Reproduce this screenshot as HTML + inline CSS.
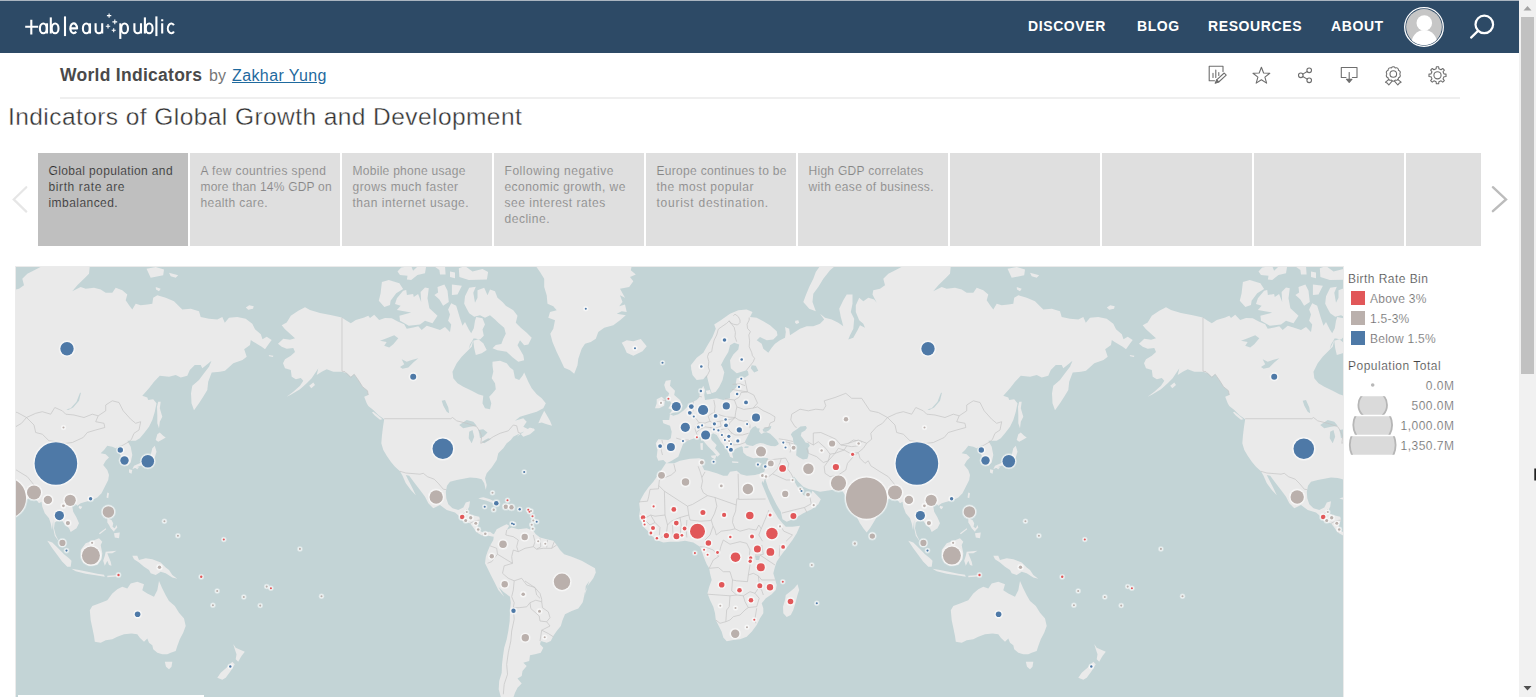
<!DOCTYPE html>
<html><head><meta charset="utf-8"><title>World Indicators</title>
<style>
*{box-sizing:border-box;margin:0;padding:0}
html,body{width:1536px;height:697px;overflow:hidden;background:#fff;font-family:"Liberation Sans",sans-serif;}
#hdr{position:absolute;left:0;top:0;width:1519px;height:53px;background:#2d4a66;box-shadow:inset 0 1px 0 #aab5c0}
.nav{position:absolute;top:18px;color:#fff;font-weight:bold;font-size:14px;letter-spacing:0.6px;line-height:16px;white-space:nowrap}
#sub{position:absolute;left:0;top:53px;width:1519px;height:46px;}
#ttl{position:absolute;left:60px;top:12px;font-size:17.5px;font-weight:bold;color:#4a4a4a;line-height:20px;letter-spacing:0.28px;white-space:nowrap}
#by{position:absolute;left:209px;top:13px;font-size:16px;color:#777;line-height:20px;}
#auth{position:absolute;left:232px;top:13px;font-size:16px;color:#1f6a9e;line-height:20px;text-decoration:underline;white-space:nowrap;letter-spacing:0.4px}
#hr{position:absolute;left:60px;top:97px;width:1400px;height:2px;background:#efefef}
#h1{position:absolute;left:8px;top:101.700px;font-size:24.5px;color:#333;-webkit-text-stroke:0.35px #fff;line-height:30px;white-space:nowrap;letter-spacing:0.43px}
.sb{position:absolute;top:153px;height:93px;width:150px;background:#dfdfdf;color:#868686;font-size:12px;line-height:16px;padding:10px 0 0 10.500px;white-space:nowrap;letter-spacing:0.28px}
.sb{-webkit-text-stroke:.15px #dfdfdf}
.sb.sel{background:#bfbfbf;color:#2e2e2e;-webkit-text-stroke:.18px #bfbfbf}
#map{position:absolute;left:15px;top:266px;width:1329px;height:431px;overflow:hidden;background:#c3d4d6}
.lg{position:absolute;font-size:12px;color:#444;line-height:14px;white-space:nowrap;-webkit-text-stroke:.2px #fff;margin-top:1px}
#scroll{position:absolute;left:1519px;top:0;width:17px;height:697px;background:#f1f1f1}
#thumb{position:absolute;left:2px;top:17px;width:13px;height:357px;background:#c1c1c1}
</style></head><body>
<div id="hdr">
<svg style="position:absolute;left:0;top:0" width="200" height="53" viewBox="0 0 200 53" fill="none" stroke="#fff" stroke-width="2.1" stroke-linecap="butt" stroke-linejoin="round"><path d="M25.200 26.800H38.200M31.300 19.700V34.600"/><ellipse cx="43.3" cy="28.4" rx="3.4" ry="4.9"/><path d="M46.99999999999999 23.3V33.5"/><path d="M50.8 17.400V33.5"/><ellipse cx="55.099999999999994" cy="28.4" rx="3.4" ry="4.9"/><path d="M65 16.400V36.100"/><path d="M70.3 28.4H77.10000000000001A3.4 4.9 0 1 0 76.2 31.599999999999998"/><ellipse cx="86.3" cy="28.4" rx="3.4" ry="4.9"/><path d="M90.0 23.3V33.5"/><path d="M95.6 23.3V30.0a3.300 3.300 0 0 0 6.600 0V23.3M102.19999999999999 23.3V33.5"/><path stroke-width="1.100" d="M106.89999999999999 15.6H111.3M109.1 13.399999999999999V17.8M112.39999999999999 21.9H117.2M114.8 19.5V24.299999999999997M105.8 26.2H110.2M108 24.0V28.4M111.7 30.3H115.7M113.7 28.3V32.3"/><path d="M120.3 23.3V38.900"/><ellipse cx="124.60000000000001" cy="28.4" rx="3.4" ry="4.9"/><path d="M134.4 23.3V30.0a3.300 3.300 0 0 0 6.600 0V23.3M141.0 23.3V33.5"/><path d="M144.9 17.400V33.5"/><ellipse cx="149.20000000000002" cy="28.4" rx="3.4" ry="4.9"/><path d="M156.400 16.400V36.100"/><path d="M162.200 23.3V33.5M162.200 19.200V21.200"/><path d="M173.9 25.299999999999997A3.4 4.9 0 1 0 173.9 31.5"/></svg>
<div class="nav" style="left:1028px">DISCOVER</div>
<div class="nav" style="left:1137px">BLOG</div>
<div class="nav" style="left:1208px">RESOURCES</div>
<div class="nav" style="left:1331px">ABOUT</div>
<svg style="position:absolute;left:1402px;top:5px" width="44" height="44" viewBox="0 0 44 44">
<defs><clipPath id="avc"><circle cx="22" cy="22" r="18.200"/></clipPath></defs>
<circle cx="22" cy="22" r="19.300" fill="none" stroke="#fff" stroke-width="1.300"/><circle cx="22" cy="22" r="17.900" fill="#c6c6c6"/>
<g clip-path="url(#avc)" fill="#fff"><circle cx="22.300" cy="18" r="7.800"/><ellipse cx="22.300" cy="38.800" rx="12.900" ry="13.700"/></g>
</svg>
<svg style="position:absolute;left:1462px;top:8px" width="40" height="36" viewBox="0 0 40 36" fill="none" stroke="#fff" stroke-width="2.200" stroke-linecap="round"><circle cx="22.300" cy="16.400" r="8.800"/><path d="M15.500 23.400l-6.400 6.200"/></svg>
</div>
<div id="sub">
<div id="ttl">World Indicators</div><div id="by">by</div><div id="auth">Zakhar Yung</div>
<svg style="position:absolute;left:1200px;top:8px" width="260" height="30" viewBox="0 0 260 30" fill="none" stroke="#6e6e6e" stroke-width="1.1" stroke-linejoin="round" stroke-linecap="round"><path d="M23 10.500V5.300H9.200V19.800H14.500"/><path d="M13 12.300V16.500M15.800 9V16.500M18.800 11.500V14.500"/><path d="M16.700 18.800L24.200 12L26.200 14.200L18.700 21Z"/><path d="M16.700 18.800L15.200 22.300L18.700 21Z" fill="#6e6e6e"/><path d="M61.4 6.2L63.6 12.0L69.8 12.3L64.9 16.1L66.6 22.1L61.4 18.7L56.2 22.1L57.9 16.1L53.0 12.3L59.2 12.0Z"/><circle cx="109.200" cy="9.300" r="2.300"/><circle cx="100.800" cy="14.300" r="2.300"/><circle cx="109.200" cy="19.300" r="2.300"/><path d="M102.800 13.100L107.200 10.500M102.800 15.500L107.200 18.100"/><path d="M146 16.500H141.300V6.500H157V16.500H152.400"/><path d="M149.200 11.500V18.500"/><path d="M146.400 18.200H152L149.200 21.500Z" fill="#6e6e6e"/><path d="M195.28 6.91A2.27 2.27 0 0 1 198.48 9.24A2.27 2.27 0 0 1 199.70 13.00A2.27 2.27 0 0 1 198.48 16.76A2.27 2.27 0 0 1 195.28 19.09A2.27 2.27 0 0 1 191.32 19.09A2.27 2.27 0 0 1 188.12 16.76A2.27 2.27 0 0 1 186.90 13.00A2.27 2.27 0 0 1 188.12 9.24A2.27 2.27 0 0 1 191.32 6.91A2.27 2.27 0 0 1 195.28 6.91Z"/><circle cx="193.300" cy="13" r="3.300"/><path d="M189 18.300L185.500 21.200L187.500 22.300L188.800 24L192.300 19.800M197.600 18.300L201.100 21.200L199.100 22.300L197.800 24L194.300 19.800"/><path d="M236.11 7.85L236.36 5.78L238.64 5.78L238.89 7.85L241.08 8.76L242.72 7.46L244.34 9.08L243.04 10.72L243.95 12.91L246.02 13.16L246.02 15.44L243.95 15.69L243.04 17.88L244.34 19.52L242.72 21.14L241.08 19.84L238.89 20.75L238.64 22.82L236.36 22.82L236.11 20.75L233.92 19.84L232.28 21.14L230.66 19.52L231.96 17.88L231.05 15.69L228.98 15.44L228.98 13.16L231.05 12.91L231.96 10.72L230.66 9.08L232.28 7.46L233.92 8.76Z"/><circle cx="237.500" cy="14.300" r="3.600"/></svg>
</div>
<div id="hr"></div>
<div id="h1">Indicators of Global Growth and Development</div>
<svg style="position:absolute;left:0;top:170px" width="40" height="60" viewBox="0 0 40 60" fill="none" stroke="#e6e6e6" stroke-width="2.2" stroke-linecap="round"><path d="M26.300 17.200L13.700 29.400L26.300 41.600"/></svg>
<svg style="position:absolute;left:1480px;top:170px" width="38" height="60" viewBox="0 0 38 60" fill="none" stroke="#bcbcbc" stroke-width="2.4" stroke-linecap="round"><path d="M12.900 17.200L26 29.400L12.900 41.200"/></svg>
<div class="sb sel" style="left:38px"><span style="letter-spacing:0.365px">Global population and</span><br><span style="letter-spacing:0.610px">birth rate are</span><br><span style="letter-spacing:0.450px">imbalanced.</span></div>
<div class="sb" style="left:190px"><span style="letter-spacing:0.395px">A few countries spend</span><br><span style="letter-spacing:0.210px">more than 14% GDP on</span><br><span style="letter-spacing:0.400px">health care.</span></div>
<div class="sb" style="left:342px"><span style="letter-spacing:0.280px">Mobile phone usage</span><br><span style="letter-spacing:0.470px">grows much faster</span><br><span style="letter-spacing:0.530px">than internet usage.</span></div>
<div class="sb" style="left:494px"><span style="letter-spacing:0.560px">Following negative</span><br><span style="letter-spacing:0.450px">economic growth, we</span><br><span style="letter-spacing:0.515px">see interest rates</span><br><span style="letter-spacing:0.520px">decline.</span></div>
<div class="sb" style="left:646px"><span style="letter-spacing:0.310px">Europe continues to be</span><br><span style="letter-spacing:0.500px">the most popular</span><br><span style="letter-spacing:0.750px">tourist destination.</span></div>
<div class="sb" style="left:798px"><span style="letter-spacing:0.280px">High GDP correlates</span><br><span style="letter-spacing:0.330px">with ease of business.</span></div>
<div class="sb" style="left:950px"></div>
<div class="sb" style="left:1102px"></div>
<div class="sb" style="left:1254px"></div>
<div class="sb" style="left:1406px;width:75px"></div>
<div class="lg" style="left:1348px;top:271px;letter-spacing:.45px">Birth Rate Bin</div>
<div style="position:absolute;left:1351px;top:291px;width:14px;height:14px;background:#e15759"></div>
<div style="position:absolute;left:1351px;top:311px;width:14px;height:14px;background:#bab0ac"></div>
<div style="position:absolute;left:1351px;top:331px;width:14px;height:14px;background:#4e79a7"></div>
<div class="lg" style="left:1370px;top:291px;color:#666;letter-spacing:.25px">Above 3%</div>
<div class="lg" style="left:1370px;top:311px;color:#666;letter-spacing:.25px">1.5-3%</div>
<div class="lg" style="left:1370px;top:331px;color:#666;letter-spacing:.25px">Below 1.5%</div>
<div class="lg" style="left:1348px;top:358px;letter-spacing:.5px">Population Total</div>
<svg style="position:absolute;left:1346px;top:375px" width="60" height="82" viewBox="0 0 60 82">
<circle cx="26.700" cy="10" r="1.800" fill="#b8b8b8"/>
<g fill="#dadada" stroke="#b6b6b6" stroke-width="1.800">
<svg x="0" y="21.300" width="60" height="18.500" viewBox="0 21.300 60 18.500"><circle cx="26.700" cy="30" r="14.300"/></svg>
<svg x="0" y="41.300" width="60" height="18.500" viewBox="0 41.300 60 18.500"><circle cx="26.700" cy="50" r="19.400"/></svg>
<svg x="0" y="61.300" width="60" height="18.500" viewBox="0 61.300 60 18.500"><circle cx="26.700" cy="70" r="22.900"/></svg>
</g>
</svg>
<div class="lg" style="left:1354.500px;top:378px;width:100px;text-align:right;color:#666;letter-spacing:.5px">0.0M</div>
<div class="lg" style="left:1354.500px;top:398px;width:100px;text-align:right;color:#666;letter-spacing:.5px">500.0M</div>
<div class="lg" style="left:1354.500px;top:418px;width:100px;text-align:right;color:#666;letter-spacing:.5px">1,000.0M</div>
<div class="lg" style="left:1354.500px;top:438px;width:100px;text-align:right;color:#666;letter-spacing:.5px">1,350.7M</div>
<div id="scroll"><div id="thumb"></div>
<svg style="position:absolute;left:0;top:0" width="17" height="697" viewBox="0 0 17 697"><path d="M4.500 10.500l4-4.500 4 4.500z" fill="#a3a3a3"/><path d="M4.500 686l4 4.500 4-4.500z" fill="#505050"/><rect x="15.300" y="468.500" width="1.700" height="12" fill="#222"/></svg>
</div>
<div id="map"><svg width="1329" height="431" viewBox="0 0 1329 431" style="position:absolute;left:0;top:0">
<defs><g id="w">
<path fill="#eaeaea" d="M263 77.7 L268.3 72.7 L275 73.7 L280 72.3 L275 67.7 L270 63.2 L266.7 59.3 L271.7 56.5 L275.8 49.8 L283.3 44.8 L290 41.2 L295 44 L305 47 L316.7 49.3 L326.7 51.5 L331.7 54.8 L335.8 57.3 L340.8 54 L349.2 51.5 L353.3 49.8 L355 52 L359.2 48.7 L362.5 52.3 L364.2 54 L370 52 L376.7 52.3 L383.3 55.7 L389.2 58.2 L391.7 62.7 L398.3 61.5 L403.3 60.3 L406.7 64 L411.7 59.8 L417.5 61.5 L425 64.1 L430 61 L435 66 L436.2 58.5 L433.1 54.8 L435 48.5 L433.1 43.5 L436.2 37.2 L441.2 39.8 L443.1 46 L445 52.2 L447.5 59.8 L450 56 L453.8 63.5 L456.2 67.2 L458.8 62.2 L460 54.8 L461.2 51 L467.5 52.2 L470 58.5 L467.5 63.5 L468.8 69.8 L465 73.5 L458.8 72.2 L455 78.5 L453.8 83 L460.8 69 L458.3 74 L456.7 80.7 L451.7 85.7 L446.7 90.7 L441.7 97.3 L437.5 105.7 L438.3 112.3 L442.5 117.3 L448.3 120.7 L456.7 124.8 L463.3 128.2 L468.3 129.8 L467.5 137.3 L470 142.3 L475 143.2 L476.3 137.3 L474.2 130.7 L477.5 127.3 L480.8 123.2 L480 117.3 L476.7 112.3 L478.3 105.7 L477.5 99.8 L477.5 95.7 L485 94.8 L491.7 97.3 L495 101.5 L498.3 104 L500 112.3 L504.2 114 L507.5 109.8 L509.2 106.5 L513.3 115.7 L516.7 122.3 L521.7 128.2 L526.7 132.3 L530.8 137.3 L528.3 142.3 L521.7 145.7 L513.3 148.2 L505 150.7 L500 154.8 L508.3 152.3 L511.7 155.7 L508.3 160.7 L513.3 163.2 L518.3 162.3 L520 164 L515 168.2 L508.3 170.7 L505 167.3 L501.7 170.7 L515 161.5 L519.2 164 L515.8 167.3 L511.7 169 L515 166.5 L510.8 164.8 L505 167.3 L498.3 170.7 L495.8 174 L491.7 177.3 L488.3 182.3 L483.3 187.3 L481.7 194 L476.7 201.5 L471.7 207.3 L470 212.3 L471.7 219 L470.8 223.7 L469.2 217.3 L466.7 213.2 L461.7 212 L455 211.5 L448.3 212.7 L441.7 214 L435 215.7 L432 219.8 L430.8 225.7 L431.3 232.3 L433.3 238.2 L437.5 242.3 L443.3 244 L448.3 241.5 L450.8 236.5 L455 235.3 L454.2 240.7 L451.7 245.7 L453.3 249 L451.7 246.5 L456.7 249 L464.2 250.7 L465 254 L462.5 259.8 L464.2 264.8 L468.3 266.5 L475 265.7 L478.3 268.2 L479.2 267.7 L481.7 263.2 L488.3 259.8 L491.7 258.2 L494.2 259.8 L491.7 264 L496.7 261.5 L503.3 263.2 L511.7 262.3 L518.3 264.8 L520.8 268.2 L525 271.5 L531.7 273.2 L538.3 274.8 L541.7 279 L545 284 L549.2 288.2 L556.7 290.7 L566.7 294.8 L574.2 299 L580 302.3 L580.8 306.5 L578.3 312.3 L573.3 319 L570 325.7 L568.3 334 L574.2 315 L570.8 320 L570 328.3 L567.5 336.7 L563.3 342.5 L556.7 345 L550 348.3 L547.5 354.2 L545.8 360 L541.7 365 L538.3 370 L535.8 375 L531.7 376.7 L525.8 375 L525 378.3 L528.3 381.7 L525.8 386.7 L520 388.3 L515 389.2 L514.2 395 L508.3 396.7 L511.7 400 L507.5 405 L506.7 410 L502.5 412.5 L506.7 417.5 L502.5 421.7 L500 426.7 L498.3 431.7 L498.3 435 L485.8 435 L485.8 431 L483.7 423.3 L484.2 415 L486.7 406.7 L487 398.3 L488 390 L489.2 381.7 L491.7 373.3 L493.3 365 L494.7 355 L495 345 L495.8 336.7 L495 330.8 L488.3 325.8 L482.5 320 L480 315 L489.2 330.7 L483.3 324 L480 317.3 L475.8 309 L472.5 302.3 L470 297.3 L470.8 290.7 L472.5 285.7 L475 279.8 L478.3 274 L478.7 270.7 L473.3 269.8 L467.5 269.8 L461.7 266.5 L458.3 261.5 L455 257.3 L448.3 255.7 L445 250.7 L440 246.5 L431.7 244 L425 239 L418.3 242.3 L413.3 237.3 L410 230.7 L405 224 L399.2 216.5 L394.2 209.8 L390.8 209 L394.2 215.7 L397.5 222.3 L400.8 229.3 L395.8 224 L390.8 217.3 L387.5 209.8 L385 205.3 L380 200.7 L375.8 195.7 L371.7 189.8 L368.3 184 L366.3 177.3 L367 169 L368 160.7 L369.2 153.2 L363.3 149 L358.3 144 L353.3 140 L351.7 137.3 L349.2 130.7 L353.3 129 L352.5 124.8 L347.5 120.7 L343.3 114 L339.2 108.2 L335.8 110.7 L331.7 107 L326.7 105.7 L318.3 105.7 L311.7 103.2 L306.7 105.7 L301.7 109 L303.3 102.3 L300 107.3 L296.7 112.3 L291.7 117.3 L285 123.2 L275.8 128.7 L271.7 130.7 L278.3 125.7 L285 119.8 L288.3 114.8 L285.8 112 L280.8 113.2 L276.7 110.7 L275.8 104 L270 102.3 L268 97.3 L270 93.2 L275.8 89.8 L280 86 L278.3 82 L271.7 82.7 L266.7 80.7ZM529.2 144.8 L531.7 149 L535 154.8 L537 159.8 L531.7 158.2 L526.7 156.5 L523.3 157.3 L525.8 151.5ZM520.8 -4 L520.8 0 L525 6 L529.2 12.7 L529.2 21 L531.7 29.3 L532.5 37.7 L538.3 40.2 L541.7 44.3 L535 46 L533.3 51.8 L540 54.3 L538.3 62.7 L535.3 67.7 L537.5 76 L541.7 86 L545 92.7 L549.2 101.8 L555 104.3 L559.2 107.7 L562.5 99.3 L563.3 92.7 L566.7 82.7 L570 77.7 L575.8 76 L580.8 72.7 L583.3 66 L589.2 61.8 L598.3 59.3 L605 54.3 L610.8 49.3 L601.7 47.7 L606.7 45.2 L611.7 46 L610 38.5 L604.2 40.2 L607.5 36 L605 29.3 L610 31.8 L605 22.7 L614.2 21 L618.3 15.2 L615 11 L620.8 8.5 L615.8 4.3 L616.7 0 L616.7 -4ZM606.7 76.8 L611.7 74.3 L618.3 75.2 L625.8 73 L631.7 80.2 L627.5 85.2 L618.3 89.7 L611.7 86.8 L609.2 81ZM450 30.2 L454.2 21.8 L460.8 20.7 L458.3 26.8 L460 36.8 L462.5 31.8 L462.5 24.3 L469.2 21.8 L472.5 29.3 L475 23.5 L480 25.2 L482.5 31.8 L487.5 36 L490.8 39.7 L498.3 44.3 L502.5 49.7 L500.8 56.8 L505.8 61.8 L511.7 66.8 L516.7 71.8 L513.3 78.5 L509.2 79.3 L505 74.3 L502.5 79.3 L508.3 89.3 L509.2 94.3 L503.3 95.7 L497.5 91.3 L491.7 85.7 L482.5 84.3 L477.5 82.3 L480.8 79 L486.3 78 L488.3 72.7 L490.8 67.7 L489.2 61.8 L483.3 56.8 L480 53.5 L475 49.3 L470 51.8 L465 49.3 L459.2 50.7 L454.2 47.3 L451.7 42.7 L449.2 37.7ZM366.9 16 L373.8 14.1 L384.4 17.2 L388.1 22.9 L381.2 27.2 L375.6 34.8 L375 39.1 L369.4 41 L363.8 34.8 L365.6 27.2ZM388.1 24.8 L391.2 24.1 L391.9 29.1 L398.1 27.9 L398.8 31 L403.1 27.9 L406.2 36 L405.6 26 L410 21.6 L413.8 22.2 L412.5 32.2 L414.4 42.2 L422.5 49.8 L420 53.5 L417.5 57.2 L410 54.8 L405 58.5 L393.8 59.8 L385 54.8 L384.4 49.8 L396.2 46.6 L381.9 44.1 L385.6 39.8 L380 37.9 L381.9 32.2ZM382.5 5.4 L386.2 1.6 L396.2 0 L398.1 4.8 L403.1 0 L411.2 0 L410 7.2 L402.5 9.1 L396.2 14.1 L391.9 13.5 L392.5 9.8 L385 9.1ZM418.8 0 L430 0 L430.6 8.5 L425 8.5 L424.4 4.1ZM435 5.4 L440 6.6 L440 12.2 L435 11ZM443.8 2.2 L450 0 L457.5 5.4 L467.5 2.9 L473.1 6 L471.9 13.5 L453.8 14.1 L444.4 11ZM422.5 21 L429.4 18.5 L432.5 24.8 L433.8 36 L428.1 39.8 L424.4 33.5 L419.4 29.1 L423.1 26.6ZM436.9 18.5 L446.9 19.8 L442.5 28.5 L436.9 29.1ZM458.3 74.8 L463.3 73.2 L468.3 77.3 L471.7 84 L466.7 87.3 L460.8 89 L459.2 82.3ZM230.8 41.5 L234.2 39.3 L238.7 40.3 L238 42.7 L233.3 43.7ZM253.7 89 L258.3 89.8 L258 91 L254.2 90.3ZM294.2 119.8 L298.3 116.5 L300 119 L296.3 122.3ZM358.3 145.7 L362.5 149 L367.5 153.2 L365 153.7 L360 149.8 L357 146.5ZM463.3 232.3 L468.3 231.3 L475 233.2 L480 235.7 L484.2 238.2 L478.3 237.2 L471.7 234.7 L465.8 233.3ZM487.5 239 L493.3 238.2 L499.2 240.7 L496.7 242.7 L490.8 242.3 L488 241.5ZM476.7 242.7 L480 243.2 L479.2 244.3 L476.3 244ZM502.5 242.3 L505.8 242.3 L505.8 243.7 L502.5 243.7ZM676.7 106 L675.8 99.3 L681.7 91.8 L688.3 86.8 L692.5 79.3 L697.5 71 L700.8 62.7 L699.2 58.5 L705.8 54.3 L715 47.7 L723.3 44.3 L731.7 43.5 L737.5 46 L735 51 L741.7 51.8 L748.3 55.2 L755 59.3 L761.7 65.2 L762.5 69.3 L758.3 73.5 L751.7 74.3 L745 71 L741.7 74.3 L746.7 77.7 L748.3 82.7 L753.3 86.8 L756.7 81.8 L760 77.7 L765 74.3 L770 71.8 L770.8 66 L770 61 L774.2 62.7 L775 69.3 L780 66 L785 62.7 L791.7 60.2 L798.3 60.2 L805 57.7 L809.2 53.5 L805 47.7 L810 51.8 L816.7 53.5 L823.3 56.8 L828.3 60.2 L825.8 51 L824.2 42.7 L828.3 34.3 L831.7 28.5 L837.5 28.5 L837.5 37.7 L835.8 46 L839.2 52.7 L838.3 62.7 L835 69.3 L833.3 73.5 L838.3 71.8 L842.5 64.3 L845 59.3 L850 61.8 L848.3 57.7 L844.2 54.3 L840.8 46 L840.8 39.3 L844.2 31.8 L848.3 35.2 L853.3 31.8 L859.2 33.5 L861.7 36.8 L857.5 28.5 L858.3 24.3 L865 22.7 L870 19.3 L868.3 12.7 L873.3 7.7 L881.7 3.5 L888.3 0 L888.3 -5.7 L935.8 -5.7 L935.8 0 L935 7.7 L930 12.7 L923.3 19.3 L918.3 25.2 L926.7 21 L931.7 22.7 L940 21.8 L946.7 23.5 L951.7 26.8 L958.3 26.8 L961.7 21.8 L968.3 24.3 L973.3 28.5 L971.7 34.3 L975.8 40.2 L978.3 43.5 L981.7 37.7 L986.7 39.3 L993.3 38.5 L998.3 37.7 L999.2 31.8 L1003.3 29.3 L1011.7 31.8 L1020 35.2 L1025 40.2 L1028.3 43.5 L1036.7 42.7 L1045 45.2 L1046.7 51 L1055 52.7 L1063.3 53.5 L1068.3 51 L1070.8 56.8 L1075 51.8 L1083.3 51 L1091.7 52.7 L1098.3 57.7 L1101 63.2 L1106.8 68.2 L1108.5 73.2 L1112.7 70.7 L1117.7 74 L1115.2 77.3 L1111 83.2 L1107.7 80.7 L1103.5 78.2 L1099.3 75.7 L1096.8 74 L1096 79 L1090.2 83.2 L1092.7 90.7 L1088.5 94 L1079.3 97.3 L1071 104.8 L1066 105.7 L1057.7 106.5 L1054.2 115.7 L1053.3 124 L1049.2 130.7 L1045 137.3 L1040 144.3 L1037.5 137.3 L1037 127.3 L1038.3 119.8 L1045 114 L1050 107.3 L1055 100.7 L1057.5 94.8 L1053.3 98.2 L1048.3 102.3 L1046.7 99 L1040.8 99 L1035.8 104 L1033.3 109.8 L1026.7 111.5 L1021.7 109 L1015 110.7 L1005.8 109.8 L1000 115.7 L995 122.3 L988.3 129.8 L993.3 131.5 L994.2 134 L999.2 133.2 L1002.5 137.3 L1000.8 145.7 L998.3 154 L995 160.7 L990 167.3 L985.8 172.3 L981.7 174.8 L975 174.8 L973.3 174.8 L976.7 180.7 L978.3 189 L976.7 196.5 L973.3 199.8 L968.3 198.2 L967.5 191.5 L965 185.7 L966.7 179 L961.7 182.3 L958.3 180.7 L953.3 179.8 L950 184 L946.7 187.3 L951.7 188.2 L955 191.5 L951.7 194.8 L949.2 199 L953.3 204 L955 209 L954.2 214 L950.8 220.7 L947.5 227.3 L943.3 231.5 L938.3 234 L931.7 235.7 L926.7 237.3 L923.3 239.8 L920.8 237.3 L916.7 235.7 L918.3 240.7 L919.2 245.7 L922.5 251.5 L925 257.3 L922.5 262.3 L916.7 266 L915 262.3 L912.5 259.8 L910 257.3 L907.5 254 L903.3 254.8 L900.8 256.5 L900 262.3 L901.7 269 L904.2 274 L906.7 280 L907.5 273.2 L910 276.5 L908.7 279 L905 275.7 L900.8 269.8 L899.2 262.3 L899.2 254 L898 264 L896.7 257.3 L895 252.3 L890.8 247.3 L888.3 240.7 L887.5 235.7 L885 237.3 L882.5 234 L878.3 230.7 L871.7 234 L866.7 242.3 L860 254 L855 262.3 L851.7 266.5 L848.3 262.3 L845 257.3 L845.8 259 L840 247.3 L833.3 234 L830 229 L826.7 224 L821.7 222.3 L816.7 224 L811.7 224.8 L805 225.7 L798.3 224 L794.2 223.2 L788.3 220.7 L783.3 215.7 L779.2 210.7 L776.7 211.5 L779.2 214.8 L781.7 219.8 L785 224 L788.3 229 L791.7 230.7 L795.8 229 L797.5 224.8 L801.7 229 L805.8 233.2 L803.3 238.2 L796.7 243.2 L788.3 247.3 L780 252.3 L771.7 255.7 L767.5 253.2 L765.8 245.7 L761.7 239 L757.5 230.7 L753.3 222.3 L750 212.3 L748.3 217 L745 209.8 L746.7 207.3 L749.2 205.7 L750.8 200.7 L751.7 195.7 L753.3 192.3 L746.7 191.5 L738.3 192.3 L731.7 189.8 L728.3 186.5 L727.5 180.7 L730 176.5 L728.3 182.3 L726.7 180.3 L721.7 182.3 L716.7 185.7 L718.3 192.3 L715 190.7 L713.3 185.7 L710 180.7 L705.8 175.7 L701.7 169 L698.3 167.3 L695 169 L696.7 174 L701.7 179 L700 182.3 L705 188.2 L702.5 190.7 L698.3 185.7 L693.3 180.7 L688.3 174.8 L685 170.7 L681.7 171.5 L676.7 173.2 L672.5 174.8 L668.3 177.3 L665.8 184 L663.3 190.7 L656.7 194.8 L651.7 197.3 L648.3 194 L643.3 194.8 L641.7 190.7 L642.5 184 L640.8 177.3 L643.3 173.2 L653.3 174 L655.8 172.3 L656.7 165.7 L655 159.8 L648.3 157.3 L647.5 154 L654.2 154 L655 148.2 L658.3 149.8 L663.3 148.2 L668.3 144.8 L671.7 141.5 L675 137.3 L681.7 134 L684.2 131.5 L685 125.7 L688.3 119.8 L690 124 L689.2 129 L690 134 L695 133.2 L701.7 132.3 L708.3 134 L715 132.3 L715 127.3 L718.3 124 L723.3 119.8 L720.8 117.3 L721.7 112.3 L730 111.5 L733.7 109 L733 105.5 L731.7 104 L730 104.8 L721.7 107.3 L715.8 102.3 L715 94 L715 94.3 L718.3 88.5 L723.3 83.5 L724.2 78.5 L719.2 76.8 L715 79.3 L713.3 86 L709.2 92.7 L705.8 99.3 L706.7 99.8 L709.3 106.3 L707.5 114.3 L704.2 121 L700.8 125.7 L696.7 127.3 L695 122.3 L693.3 115.7 L691.7 109 L688.3 113.2 L681.7 114 L677.5 109 L675.8 100.7ZM650.8 197.3 L659.2 197.3 L665 194.8 L675 192.7 L684.2 192.3 L689.2 193.7 L686.7 199 L689.2 204 L693.3 204.8 L701.7 207.3 L708.3 209.8 L712.5 209.8 L715 205.7 L721.7 204.8 L725.8 208.2 L731.7 209.8 L740 209 L746.7 207.3 L748.3 209.8 L746.7 217.3 L750.8 227.3 L755 237.3 L758.3 244 L763.3 252.3 L767.5 257.3 L770.8 260.7 L777.5 260.7 L785 259.8 L781.7 267.3 L777.5 274 L772.5 280.7 L770 284 L765 290.7 L761.7 295.7 L760 300.7 L758.3 307.3 L760 313.2 L761.7 319 L760.8 324 L756.7 328.2 L750.8 332.3 L746.7 337.3 L748.3 342.3 L748.3 347.3 L745 352.3 L741.7 359 L736.7 365.7 L731.7 370.7 L725 373.2 L718.3 374 L711.7 375.3 L708.3 371.5 L706.7 365.7 L703.3 359 L700.8 354 L700 347.3 L698.3 340.7 L695 334 L692.5 327.3 L694.2 320.7 L696.7 314 L695 307.3 L694.2 302.3 L691.7 298.2 L689.2 292.3 L687.5 287.3 L685 280.7 L685 280.7 L678.3 276.5 L670 274.8 L663.3 275.7 L655 275.7 L648.3 276.5 L641.7 274 L636.7 269.8 L632.5 264.8 L628.3 260.7 L626.7 255.7 L624.2 249.8 L625 244 L624.2 237.3 L625.8 233.2 L629.2 227.3 L633.3 221.5 L638.3 215.7 L642.5 209.8 L647.5 202.3ZM782.5 318.2 L784.2 324 L782.5 329 L780.8 335.7 L778.3 344 L775.8 349 L771.7 351 L768.3 347.3 L768 340.7 L770 334 L770.8 329 L775 325.7 L779.2 322.3ZM805 0 L820 0 L815 4.3 L808.3 12.7 L803.3 21 L798.3 27.7 L797.5 36 L800.8 45.2 L794.2 42.7 L788.3 36 L790.8 29.3 L794.2 21 L798.3 12.7 L800.8 6ZM780.3 54.7 L783.3 54.3 L784.2 56.8 L781.7 58 L780 56.8ZM992.5 2.7 L1001.7 1 L1010 3.5 L1009.2 9.3 L996.7 11.8ZM1015 6.8 L1024.2 9.3 L1021.7 11.8 L1016.7 10.2ZM1001.7 21 L1006.7 22.7 L1005 25.2 L1002 23.5ZM650.8 114.8 L655.8 114 L655 119.8 L660 124.8 L659.2 129 L665 134 L667.5 139.8 L665 144 L661.7 145.7 L654.2 148.2 L657.5 144 L653.3 142.3 L656.7 137.3 L652.5 132.3 L654.2 127.3 L650.8 124 L649.2 119ZM641.7 133.2 L646.7 130.7 L650 134 L649.2 139.8 L644.2 142.3 L640 142.3 L641.7 137.3ZM690.8 124.8 L695 124 L696.2 127.7 L692 128.3ZM695.8 189.8 L701.7 189 L700 193.2 L696.7 191.5ZM685.3 177.3 L687.8 177 L687.8 184 L685.7 183.7ZM685.8 171.5 L687.5 171 L687.7 174.8 L686.2 174.8ZM717 195.3 L723.3 195.7 L723.3 197 L717.3 196.7ZM741.3 198.7 L746.7 196.7 L745.8 198.7 L742.5 199.5ZM1004.2 135.7 L1006.7 135.7 L1005.8 142.3 L1008.3 150.7 L1005.8 155.7 L1005 162.3 L1003.3 157.3 L1003.3 149 L1003 140.7ZM1003.3 168.2 L1005.8 166.5 L1009.2 169.8 L1011.7 171.5 L1007.5 174 L1004.2 175.7 L1001.7 174ZM1000.8 179.8 L1002.5 185.7 L1000.8 191.5 L996.7 195.7 L991.7 198.2 L986.7 199.8 L981.7 201.5 L978.3 203.2 L980 199.8 L985.8 197.3 L991.7 194.8 L996.7 189 L998.3 182.3ZM975 203.2 L978.3 204 L977.5 207.7 L975 206.5ZM980.8 201.5 L985 201 L983.3 203.2ZM953.3 226.5 L955 227.3 L954.2 232.3 L952.5 231.5ZM925 239.8 L928.3 240.7 L926.7 243.2 L924.7 242ZM953.3 252.3 L957.5 254 L959.2 257.3 L958.3 262.3 L960.8 264 L960 265.7 L956.7 262.3 L955 259 L953.3 256.5ZM960 267.3 L965.8 266.5 L965 272.3 L960.8 271.5ZM945 267.3 L951.7 262.3 L952.2 263.3 L945.8 268.3ZM956.7 259.8 L960.8 262.3 L962.5 259 L963.3 261.5 L960.8 264.3 L957.5 262.3ZM893.3 274.8 L898.3 276.5 L904.2 282.3 L910 288.2 L915 292.3 L917.5 294.8 L916.7 300.7 L913.3 300.7 L908.3 295.7 L903.3 289 L898.3 282.3ZM917.5 302.7 L925 304 L935 306 L943.3 307.7 L950 308.7 L950.8 310.7 L941.7 309.3 L931.7 307.7 L921.7 305.3ZM926.7 284 L931.7 277.3 L940.8 274 L945 272.3 L948.3 275.7 L946.7 279 L948.3 287.3 L947.5 293.2 L943.3 299 L935 299.8 L929.2 296.5 L927 290.7ZM951.7 285.7 L962.5 284.8 L958.3 287.3 L953.3 287.3 L955 291.5 L956.7 295.7 L957.5 299.8 L955 299 L953.3 294.8 L950.8 299.8 L949.2 294.8 L950.8 289.8ZM953.3 309.8 L965 309 L965 310.3 L953.3 311.2ZM978.3 289.8 L983.3 289.8 L985 294 L991.7 292.3 L998.3 293.2 L1006.7 296.5 L1011.7 301.5 L1015 304 L1018.3 309 L1023.3 312.7 L1018.3 311.5 L1011.7 307.3 L1006.7 305.7 L1001.7 309 L996.7 307.3 L995 304 L990 300.7 L985 296.5 L980 293.2ZM935.8 344.2 L938.3 340 L945 337.5 L953.3 334.2 L958.3 327.5 L963.3 323.3 L968.3 320.8 L973.3 322.5 L976.7 317.5 L983.3 315.8 L990 318.3 L988.3 324.2 L993.3 327.5 L1000 330.8 L1003.3 324.2 L1005 315 L1008.3 322.5 L1011.7 329.2 L1015 335 L1020.8 340 L1025 346.7 L1030 352.5 L1031.7 360 L1029.2 366.7 L1025.8 373.3 L1023.3 380 L1021.7 385 L1016.7 386.7 L1013.3 388.3 L1008.3 388.3 L1003.3 386.7 L999.2 383.3 L998.3 379.2 L995 376.7 L993.3 372.5 L990 375.8 L985.8 371.7 L983.3 368.3 L977.5 367.5 L970 368.3 L963.3 370.8 L958.3 373.3 L951.7 374.2 L946.7 376.7 L940.8 375.8 L940 370 L938.3 361.7 L936.7 354.2ZM1010.8 395.8 L1018.3 395.8 L1017.5 400.8 L1015 403.3 L1012 400.8ZM1079.2 378 L1081.7 381.7 L1085 383.3 L1090.8 385.8 L1087.5 390 L1084.2 395.8 L1081.7 393.3 L1082.5 388.3 L1080.8 383.3ZM1078.3 395.8 L1080.8 398.3 L1076.7 405 L1071.7 411.7 L1068.3 413.7 L1063.3 411.7 L1066.7 406.7 L1072.5 401.7Z"/>
<path fill="#c3d4d6" d="M365 74.8 L371.7 72.3 L379.2 69.3 L383.3 72.3 L378.3 78.2 L374.2 81.5 L369.2 79.8 L371.7 76ZM385 101 L389.2 98.2 L386.7 93.2 L391.7 95.7 L396.7 94 L403.3 92.3 L398.3 96.5 L393.3 101.5 L387.5 102.7ZM444.2 159 L451.7 154 L458.3 155.7 L461.7 159.8 L455 160.7 L448.3 162.3ZM454.2 165.7 L457.5 164 L459.2 170.7 L456.7 177.3 L453.7 172.3ZM463.3 164 L468.3 163.2 L472.5 166.5 L468.3 170.7 L465 172.3 L464.2 167.3ZM466.7 175.7 L473.3 172.3 L475.8 173.2 L469.2 177.3ZM426.7 134.8 L430 134 L433.3 141.5 L434.2 147.3 L431.7 145.7 L428.3 139.8ZM730 175.6 L732.2 171.3 L734 167.7 L735.4 164.1 L737.9 161.2 L740.5 160.1 L742.3 162.3 L744.8 162.6 L744 165.2 L746.2 168 L749.1 166.6 L751.6 166.2 L755.2 167.7 L758.8 171.3 L761.6 174.1 L763.8 177.4 L763.1 178.8 L760.2 180.2 L755.9 179.9 L751.6 178.8 L748.7 177.4 L745.1 177 L741.5 178.1 L737.9 179.9 L734.4 179.5 L731.5 178.4 L730 176.6ZM747.6 163.4 L750.2 161.6 L753.7 160.8 L756.3 159.8 L755.9 162.3 L753.7 164.4 L750.9 165.9 L748.4 165.5ZM729.7 180.6 L733.6 180.2 L733.3 181.7 L729.3 182ZM775.8 168.4 L777.6 165.9 L781.9 163.3 L785.4 160.5 L790.8 160.1 L791.9 161.9 L790.1 164.4 L786.5 166.6 L785.8 169.8 L788.7 173.4 L790.5 176.6 L793.7 177.3 L794.8 179.8 L793 182 L793.7 184.9 L793.3 189.9 L792.3 192.8 L788 193.5 L783.7 191.3 L781.1 189.2 L781.5 184.9 L780.4 180.6 L778.3 176.3 L777.9 172ZM736.7 99.3 L740.8 99.8 L743.3 104.8 L739.2 106.5 L735.8 102.3ZM740 289.8 L745 289.8 L744.2 294 L740.8 294ZM912.5 143.2 L916.7 142.3 L922.5 135.7 L925.8 127.3 L927 126.5 L925 134.8 L919.2 141.5 L914.2 144Z"/>
<path fill="none" stroke="#c4c4c4" stroke-width="0.7" d="M327 51.5 L327 105.2 L330 105.7 L335.8 111.5 L339.2 108.2 L343.3 114 L347.5 120.7 L352.5 124.8 L353.3 129M369.2 152.7 L435.8 152.7 L437.5 151.5 L441.7 154.8 L451.7 157.3 L461.7 160.7 L465 165.7 L466.7 170.7 L465.8 177.3 L473.3 174 L478.3 170.7 L485 167.3 L493.3 164.8 L498.3 159 L501.7 159.8 L503.3 166.5 L505.8 167.3M385 205.3 L390.8 207 L405 208.2 L408.3 207.3 L412.5 210.7 L419.2 213.2 L423.3 217.3 L428.3 223.2 L431.3 223.7M781.7 161.5 L780 160.7 L775.8 154 L776.7 148.2 L785 143.2 L793.3 144.8 L800.8 143.2 L808.3 144 L810.8 139.8 L809.2 134.8 L820 131.5 L830.8 127.3 L836.7 132.3 L846.7 132.3 L855 144.8 L863.3 146.5 L872.5 151.5 L867.5 157.3 L861.7 160.7 L855.8 167.3 L856.7 173.2 L851.7 177.3 L843.3 174 L833.3 177.3 L825.8 179 L820.8 173.2 L813.3 169.8 L805.8 166.5 L798.3 167 L798.3 179 L792.5 175.7M872.5 151.5 L881.7 147.3 L888.3 145.7 L896.7 148.2 L900.8 141.5 L908.3 144.8 L911.7 148.2 L920 149 L930 151.5 L938.3 148.2 L944.2 149.8 L941.7 155.7 L950 157.3 L950.8 161.5 L941.7 164 L933.3 166.5 L929.2 171.5 L918.3 176.5 L911.7 177.3 L903.3 175.7 L895 174.8 L888.3 168.2 L881.7 166.5 L880 159 L875 154 L872.5 151.5M944.2 149.8 L951.7 144.8 L951.7 139 L958.3 134.8 L965 136.5 L969.2 144.8 L976.7 153.2 L981.7 157.3 L986.7 155.7 L985 164 L980 167.3 L977.5 173.2 L975 175.7 L969.2 179 L964.2 181.5M825.8 179 L831.7 179.8 L829.2 184 L823.3 182.3 L820 187.3 L815 188.2 L810.8 182.3 L803.3 175.7 L798.3 179M815 188.2 L813.3 194.8 L808.3 196.5 L801.7 190.7 L793.3 187.3 L791.7 182.3M813.3 194.8 L820 187.3 L829.2 184 L835 187.3 L843.3 186.5 L838.3 190.7 L832.5 197.3 L830.8 204 L823.3 209 L815 210.7 L810 207.3 L809.2 200.7 L813.3 194.8M851.7 177.3 L848.3 182.3 L843.3 186.5 L845 192.3 L850 197.3 L853.3 194.8 L855.8 199.8 L865 205.7 L873.3 210.7 L880 219M833.3 177.3 L838.3 174 L846.7 175.7 L843.3 179.8 L836.7 180.7 L831.7 179.8M658.8 197.8 L660.6 205.2 L656.2 209 L648.8 212.1 L644.4 214 L643.8 219 L643.5 222.8 L635 223.4 L633.8 230.2 L632.5 235.2 L623.8 235.9M643.8 219.6 L649.4 225.2 L672.5 240.2 L677.5 238.4 L692.5 229.6 L700 231.5 L721.2 239 L721.9 232.8 L723.8 233M683.1 200.2 L685 205.2 L686.9 211.5 L687.5 215.2 L686.2 221.5 L688.1 226.5 L692.5 229.6M686.9 211.5 L690 205.9M723.1 207.8 L723.8 233.4 L750.6 233M700 231.5 L701.9 240.2 L699.4 247.8 L696.2 254 L698.1 260.2 L695 269 L690 274M721.2 239 L720.6 245.2 L718.1 251.5 L717.5 256.5 L720 262.8 L725 265.2 L733.8 262.8 L741.2 264 L743.8 259 L746.2 262.8 L749.4 255.2 L752.5 247.8 L753.8 244M649.4 225.2 L650 249 L640 250.2 L635.6 249 L631.2 251.5 L625 247.8M672.5 240.2 L673.8 249 L665 251.5 L656.2 255.2 L652.5 259 L650 249M673.8 249 L675 254 L685 255.2 L695 254.6 L696.2 254M720 262.8 L715 264 L706.2 265.2 L701.2 269 L700 264 L698.1 260.2M746.2 262.8 L743.8 269 L747.5 275.2M765 259 L768.8 265.2 L777.5 269 L771.2 275.2M766.9 247.1 L778.8 244 L789.4 241.5 L796.2 237.8 L795 231.5M789.4 241.5 L791.9 246.5M750 213.4 L757.5 207.8 L771.2 214 L776.9 214M751.2 194 L758.8 193.4 L770.6 192.1 L773.8 197.8 L772.5 202.8 L776.2 207.8 L778.8 212.8M757.5 207.8 L762.5 202.8 L765 196.5 L766.2 192.8M652.5 259 L651.2 269 L646.2 271.5M657.5 259 L658.1 270.2M665 251.5 L666.2 259 L665 271.5M671.9 254 L671.2 264 L671.9 271.5M635.6 249 L640 256.5 L635 259 L631.2 255.2M640 256.5 L645 261.5 L644.4 269M694.2 302.3 L703.3 301.5 L708.3 305.7 L715 305.7 L717.5 314 L721.7 314.8 L732.5 315.7 L733.3 309 L738.3 307.3 L743.3 309.8 L746.7 314 L760 314M717.5 314 L716.7 324.8 L721.7 329M692.5 328.2 L715 329.8 L721.7 329 L728.3 329.8 L735 325.7 L740 327.3 L744.2 332.3 L741.7 340.7 L733.3 341.5 L730 335.7 L728.3 329.8M715 329.8 L714.2 340.7 L711.7 344 L710.8 355.7 L715 354 L718.3 350.7 L725 349 L730 344 L733.3 341.5M700.8 354 L705 357.3 L710.8 355.7M741.7 342.3 L740 352.3 L740.8 357.3M745 289 L760 299M765 279 L764.2 290.7M746.7 279 L748.3 288.2 L745 289 L740 289M735 284 L734.2 290.7 L735 299 L733.3 309M685 280.7 L691.7 281.5 L698.3 284 L703.3 290.7 L698.3 294 L694.2 302.3M703.3 290.7 L705.8 280.7 L708.3 274M735 284 L731.7 277.3 L725 275.7 L715 278.2 L708.3 274M740 327.3 L743.3 322.3 L746.7 324 L748.3 329M743.3 309.8 L744.2 317.3 L746.7 324M491.7 264 L490.8 269 L498.3 270.7 L503.3 274 L501.7 280.7 L503.3 285.7 L498.3 284 L496.7 290.7 L497.5 297.3 L489.2 299.8 L487.5 307.3 L493.3 312.3 L499.2 314.8 L506.7 312.3 L511.7 319 L520 321.5 L521.7 329 L525 332.3M475 279.8 L481.7 282.3 L482.5 288.2 L489.2 292.3 L497.5 297.3M472.5 297.3 L476.7 295.7 L482.5 288.2M503.3 285.7 L510 282.3 L518.3 280.7 L521.7 283.2 L528.3 282.3 L536.7 282.3 L541.7 279M518.3 269 L520 275.7 L518.3 280.7M525 272.3 L525.8 280.7 L521.7 283.2M532.5 274 L531.7 281.5M539.2 275.7 L536.7 282.3M499.2 314.8 L498.3 324 L496.7 330.7M510 315 L520 321.7 L525 327.5 L526.7 333.3 L526.7 335.8 L520.8 334.2 L515 336.7 L511.7 340.8 L504.2 341.7 L498.3 341.7 L499.2 336.7 L496.7 330.8M515 336.7 L515.8 342.5 L524.2 350 L525 355 L531.7 355.8 L535 351.7 L533.3 345.8 L527.5 341.7 L526.7 335.8M498.3 341.7 L499.2 353.3 L496.7 365 L495.8 375 L493.3 386.7 L491.7 398.3 L492.5 408.3 L489.2 418.3 L488.3 428.3M531.7 355.8 L535 360 L526.7 364.2 L525.8 370 L525 375M526.7 364.2 L533.3 367.5 L538.3 370.8M445 250.7 L450 246.5 L451.7 243.2M448.3 255.7 L453.3 252.3 L456.7 249M455 257.3 L460 254.8 L465 254M461.7 266.5 L464.2 264.8M467.5 269.8 L469.2 266.5M714.2 54.8 L711.7 57.3 L706.7 60.7 L703.3 63.2 L701.7 69 L699.2 74 L697.5 80.7 L696.7 85.7 L693.8 86.9 L692.5 90.7 L693.8 95.7 L693.3 100.7 L694.6 104.8 L692.5 109 L690.8 112M714.2 54.8 L716.7 58.2 L719.2 61.5 L720.4 66.5 L720 70.7 L721.7 75.7M714.2 54.8 L715 56.5 L718.3 58.2 L722.5 59 L725 56.5 L725 54 L723.3 50.7 L720 48.2 L718.3 49.8M734.2 51.5 L734.2 54 L732.1 58.2 L732.5 62.3 L735.4 65.7 L733.8 69 L734.6 74.8 L734.2 80.7 L736.7 86.5 L737.5 89.8 L739.6 92.3 L738.3 95.7 L735 99.8 L731.7 104M646.9 174 L648.1 179 L646.2 184 L647.5 189M661.2 172.1 L667.5 174 L673.8 174M673.8 145.2 L677.5 150.2 L681.2 152.8 L683.8 156.5 L681.9 159 L680 162.8 L681.2 166.5 L683.1 170.9M698.8 134 L700 140.2 L699.4 146.5 L696.2 147.8 L693.1 150.2 L695 155.2M683.8 130.2 L686.9 130.9M678.1 135.2 L678.8 141.5 L677.5 146.5 L677.5 150.2M683.8 156.5 L690 157.1 L695 155.2 L696.9 156.5 L705 155.2 L706.2 160.2 L701.2 162.1 L695 161.5 L690 160.9 L685 163.4 L681.2 166.5M699.4 146.5 L705 149 L711.2 150.9 L720 151.5 L720.6 146.5 L721.9 140.9 L719.4 134 L710 132.8M721.9 140.9 L728.8 143.4 L738.1 142.1 L742.5 137.1 L738.8 129 L732.5 125.9 L726.2 126.5 L723.8 131.5 L719.4 134M716.9 123.4 L723.8 124.6 L732.5 125.9 L731.2 119.6 L730 114M717.5 118.4 L725 117.8 L730 119.6M738.1 142.1 L742.5 140.9 L748.1 144.6 L755 147.8 L760 150.9 L759.4 155.2 L755 157.1 L753.8 161.5 L748.8 162.1M720 151.5 L723.8 154 L728.8 155.2 L732.5 154.6 L735 159 L735 162.1M720 151.5 L715 156.5 L712.5 162.1 L716.2 166.5 L720 169 L727.5 169 L733.8 167.1M705 155.2 L711.2 154 L717.5 152.8 L720 151.5M718.8 179 L725 178.4 L730 176.5M695 161.5 L700 163.4 L705 164 L712.5 162.1M705 164 L707.5 170.2 L712.5 176.5 L716.2 179 L718.8 179M716.2 166.5 L715 172.8 L717.5 176.5 L718.8 179M766.2 175.2 L773.8 176.5 L776.2 181.5 L775 186.5M763.8 172.8 L771.2 174 L778.1 175.5M773.8 176.5 L780.6 178.6M647.5 134 L650.6 134.6 L651.9 132.8"/>
</g></defs>
<use href="#w" x="-861"/><use href="#w"/><use href="#w" x="861"/>
<circle cx="40.9" cy="197.5" r="23" fill="#fff" fill-opacity=".4"/><circle cx="40.9" cy="197.5" r="22.1" fill="#fff" fill-opacity=".6"/><circle cx="40.9" cy="197.5" r="21.3" fill="#4e79a7"/>
<circle cx="901.9" cy="197.5" r="23" fill="#fff" fill-opacity=".4"/><circle cx="901.9" cy="197.5" r="22.1" fill="#fff" fill-opacity=".6"/><circle cx="901.9" cy="197.5" r="21.3" fill="#4e79a7"/>
<circle cx="-9.5" cy="232.1" r="22.3" fill="#fff" fill-opacity=".4"/><circle cx="-9.5" cy="232.1" r="21.4" fill="#fff" fill-opacity=".6"/><circle cx="-9.5" cy="232.1" r="20.6" fill="#bab0ac"/>
<circle cx="851.5" cy="232.1" r="22.3" fill="#fff" fill-opacity=".4"/><circle cx="851.5" cy="232.1" r="21.4" fill="#fff" fill-opacity=".6"/><circle cx="851.5" cy="232.1" r="20.6" fill="#bab0ac"/>
<circle cx="427.8" cy="182.7" r="12" fill="#fff" fill-opacity=".4"/><circle cx="427.8" cy="182.7" r="11.1" fill="#fff" fill-opacity=".6"/><circle cx="427.8" cy="182.7" r="10.3" fill="#4e79a7"/>
<circle cx="1288.8" cy="182.7" r="12" fill="#fff" fill-opacity=".4"/><circle cx="1288.8" cy="182.7" r="11.1" fill="#fff" fill-opacity=".6"/><circle cx="1288.8" cy="182.7" r="10.3" fill="#4e79a7"/>
<circle cx="75.9" cy="289.6" r="10.7" fill="#fff" fill-opacity=".4"/><circle cx="75.9" cy="289.6" r="9.8" fill="#fff" fill-opacity=".6"/><circle cx="75.9" cy="289.6" r="9" fill="#bab0ac"/>
<circle cx="936.9" cy="289.6" r="10.7" fill="#fff" fill-opacity=".4"/><circle cx="936.9" cy="289.6" r="9.8" fill="#fff" fill-opacity=".6"/><circle cx="936.9" cy="289.6" r="9" fill="#bab0ac"/>
<circle cx="547" cy="315.8" r="9.9" fill="#fff" fill-opacity=".4"/><circle cx="547" cy="315.8" r="9" fill="#fff" fill-opacity=".6"/><circle cx="547" cy="315.8" r="8.2" fill="#bab0ac"/>
<circle cx="823.5" cy="217.1" r="9.3" fill="#fff" fill-opacity=".4"/><circle cx="823.5" cy="217.1" r="8.4" fill="#fff" fill-opacity=".6"/><circle cx="823.5" cy="217.1" r="7.6" fill="#bab0ac"/>
<circle cx="682.5" cy="265.3" r="9.2" fill="#fff" fill-opacity=".4"/><circle cx="682.5" cy="265.3" r="8.3" fill="#fff" fill-opacity=".6"/><circle cx="682.5" cy="265.3" r="7.5" fill="#e15759"/>
<circle cx="19" cy="226.5" r="8.7" fill="#fff" fill-opacity=".4"/><circle cx="19" cy="226.5" r="7.8" fill="#fff" fill-opacity=".6"/><circle cx="19" cy="226.5" r="7" fill="#bab0ac"/>
<circle cx="880" cy="226.5" r="8.7" fill="#fff" fill-opacity=".4"/><circle cx="880" cy="226.5" r="7.8" fill="#fff" fill-opacity=".6"/><circle cx="880" cy="226.5" r="7" fill="#bab0ac"/>
<circle cx="52" cy="82.7" r="8.4" fill="#fff" fill-opacity=".4"/><circle cx="52" cy="82.7" r="7.5" fill="#fff" fill-opacity=".6"/><circle cx="52" cy="82.7" r="6.7" fill="#4e79a7"/>
<circle cx="913" cy="82.7" r="8.4" fill="#fff" fill-opacity=".4"/><circle cx="913" cy="82.7" r="7.5" fill="#fff" fill-opacity=".6"/><circle cx="913" cy="82.7" r="6.7" fill="#4e79a7"/>
<circle cx="421.2" cy="231" r="8.4" fill="#fff" fill-opacity=".4"/><circle cx="421.2" cy="231" r="7.5" fill="#fff" fill-opacity=".6"/><circle cx="421.2" cy="231" r="6.7" fill="#bab0ac"/>
<circle cx="1282.2" cy="231" r="8.4" fill="#fff" fill-opacity=".4"/><circle cx="1282.2" cy="231" r="7.5" fill="#fff" fill-opacity=".6"/><circle cx="1282.2" cy="231" r="6.7" fill="#bab0ac"/>
<circle cx="132.8" cy="195.3" r="8" fill="#fff" fill-opacity=".4"/><circle cx="132.8" cy="195.3" r="7.1" fill="#fff" fill-opacity=".6"/><circle cx="132.8" cy="195.3" r="6.3" fill="#4e79a7"/>
<circle cx="993.8" cy="195.3" r="8" fill="#fff" fill-opacity=".4"/><circle cx="993.8" cy="195.3" r="7.1" fill="#fff" fill-opacity=".6"/><circle cx="993.8" cy="195.3" r="6.3" fill="#4e79a7"/>
<circle cx="93.4" cy="245.9" r="7.45" fill="#fff" fill-opacity=".4"/><circle cx="93.4" cy="245.9" r="6.55" fill="#fff" fill-opacity=".6"/><circle cx="93.4" cy="245.9" r="5.75" fill="#bab0ac"/>
<circle cx="954.4" cy="245.9" r="7.45" fill="#fff" fill-opacity=".4"/><circle cx="954.4" cy="245.9" r="6.55" fill="#fff" fill-opacity=".6"/><circle cx="954.4" cy="245.9" r="5.75" fill="#bab0ac"/>
<circle cx="756.9" cy="267.5" r="7.45" fill="#fff" fill-opacity=".4"/><circle cx="756.9" cy="267.5" r="6.55" fill="#fff" fill-opacity=".6"/><circle cx="756.9" cy="267.5" r="5.75" fill="#e15759"/>
<circle cx="55.2" cy="234.3" r="7.3" fill="#fff" fill-opacity=".4"/><circle cx="55.2" cy="234.3" r="6.4" fill="#fff" fill-opacity=".6"/><circle cx="55.2" cy="234.3" r="5.6" fill="#bab0ac"/>
<circle cx="916.2" cy="234.3" r="7.3" fill="#fff" fill-opacity=".4"/><circle cx="916.2" cy="234.3" r="6.4" fill="#fff" fill-opacity=".6"/><circle cx="916.2" cy="234.3" r="5.6" fill="#bab0ac"/>
<circle cx="793.4" cy="202.8" r="6.95" fill="#fff" fill-opacity=".4"/><circle cx="793.4" cy="202.8" r="6.05" fill="#fff" fill-opacity=".6"/><circle cx="793.4" cy="202.8" r="5.25" fill="#bab0ac"/>
<circle cx="732.9" cy="222.9" r="6.95" fill="#fff" fill-opacity=".4"/><circle cx="732.9" cy="222.9" r="6.05" fill="#fff" fill-opacity=".6"/><circle cx="732.9" cy="222.9" r="5.25" fill="#bab0ac"/>
<circle cx="688.1" cy="144" r="6.8" fill="#fff" fill-opacity=".4"/><circle cx="688.1" cy="144" r="5.9" fill="#fff" fill-opacity=".6"/><circle cx="688.1" cy="144" r="5.1" fill="#4e79a7"/>
<circle cx="746" cy="185.6" r="6.7" fill="#fff" fill-opacity=".4"/><circle cx="746" cy="185.6" r="5.8" fill="#fff" fill-opacity=".6"/><circle cx="746" cy="185.6" r="5" fill="#bab0ac"/>
<circle cx="720.5" cy="291.2" r="6.5" fill="#fff" fill-opacity=".4"/><circle cx="720.5" cy="291.2" r="5.6" fill="#fff" fill-opacity=".6"/><circle cx="720.5" cy="291.2" r="4.8" fill="#e15759"/>
<circle cx="670.3" cy="161.3" r="6.3" fill="#fff" fill-opacity=".4"/><circle cx="670.3" cy="161.3" r="5.4" fill="#fff" fill-opacity=".6"/><circle cx="670.3" cy="161.3" r="4.6" fill="#4e79a7"/>
<circle cx="44.4" cy="249.6" r="6.3" fill="#fff" fill-opacity=".4"/><circle cx="44.4" cy="249.6" r="5.4" fill="#fff" fill-opacity=".6"/><circle cx="44.4" cy="249.6" r="4.6" fill="#4e79a7"/>
<circle cx="905.4" cy="249.6" r="6.3" fill="#fff" fill-opacity=".4"/><circle cx="905.4" cy="249.6" r="5.4" fill="#fff" fill-opacity=".6"/><circle cx="905.4" cy="249.6" r="4.6" fill="#4e79a7"/>
<circle cx="661.3" cy="140.5" r="6.2" fill="#fff" fill-opacity=".4"/><circle cx="661.3" cy="140.5" r="5.3" fill="#fff" fill-opacity=".6"/><circle cx="661.3" cy="140.5" r="4.5" fill="#4e79a7"/>
<circle cx="690.6" cy="169" r="6.2" fill="#fff" fill-opacity=".4"/><circle cx="690.6" cy="169" r="5.3" fill="#fff" fill-opacity=".6"/><circle cx="690.6" cy="169" r="4.5" fill="#4e79a7"/>
<circle cx="32.9" cy="233.9" r="5.9" fill="#fff" fill-opacity=".4"/><circle cx="32.9" cy="233.9" r="5" fill="#fff" fill-opacity=".6"/><circle cx="32.9" cy="233.9" r="4.2" fill="#bab0ac"/>
<circle cx="893.9" cy="233.9" r="5.9" fill="#fff" fill-opacity=".4"/><circle cx="893.9" cy="233.9" r="5" fill="#fff" fill-opacity=".6"/><circle cx="893.9" cy="233.9" r="4.2" fill="#bab0ac"/>
<circle cx="109.5" cy="194.5" r="5.9" fill="#fff" fill-opacity=".4"/><circle cx="109.5" cy="194.5" r="5" fill="#fff" fill-opacity=".6"/><circle cx="109.5" cy="194.5" r="4.2" fill="#4e79a7"/>
<circle cx="970.5" cy="194.5" r="5.9" fill="#fff" fill-opacity=".4"/><circle cx="970.5" cy="194.5" r="5" fill="#fff" fill-opacity=".6"/><circle cx="970.5" cy="194.5" r="4.2" fill="#4e79a7"/>
<circle cx="720.2" cy="367.7" r="5.9" fill="#fff" fill-opacity=".4"/><circle cx="720.2" cy="367.7" r="5" fill="#fff" fill-opacity=".6"/><circle cx="720.2" cy="367.7" r="4.2" fill="#bab0ac"/>
<circle cx="655.9" cy="181.1" r="5.7" fill="#fff" fill-opacity=".4"/><circle cx="655.9" cy="181.1" r="4.8" fill="#fff" fill-opacity=".6"/><circle cx="655.9" cy="181.1" r="4" fill="#4e79a7"/>
<circle cx="741" cy="151.5" r="5.7" fill="#fff" fill-opacity=".4"/><circle cx="741" cy="151.5" r="4.8" fill="#fff" fill-opacity=".6"/><circle cx="741" cy="151.5" r="4" fill="#4e79a7"/>
<circle cx="745.8" cy="301.2" r="5.7" fill="#fff" fill-opacity=".4"/><circle cx="745.8" cy="301.2" r="4.8" fill="#fff" fill-opacity=".6"/><circle cx="745.8" cy="301.2" r="4" fill="#e15759"/>
<circle cx="755.4" cy="285.9" r="5.6" fill="#fff" fill-opacity=".4"/><circle cx="755.4" cy="285.9" r="4.7" fill="#fff" fill-opacity=".6"/><circle cx="755.4" cy="285.9" r="3.9" fill="#e15759"/>
<circle cx="488" cy="278.3" r="5.5" fill="#fff" fill-opacity=".4"/><circle cx="488" cy="278.3" r="4.6" fill="#fff" fill-opacity=".6"/><circle cx="488" cy="278.3" r="3.8" fill="#bab0ac"/>
<circle cx="1349" cy="278.3" r="5.5" fill="#fff" fill-opacity=".4"/><circle cx="1349" cy="278.3" r="4.6" fill="#fff" fill-opacity=".6"/><circle cx="1349" cy="278.3" r="3.8" fill="#bab0ac"/>
<circle cx="670.5" cy="216.1" r="5.45" fill="#fff" fill-opacity=".4"/><circle cx="670.5" cy="216.1" r="4.55" fill="#fff" fill-opacity=".6"/><circle cx="670.5" cy="216.1" r="3.75" fill="#bab0ac"/>
<circle cx="734.8" cy="249.5" r="5.45" fill="#fff" fill-opacity=".4"/><circle cx="734.8" cy="249.5" r="4.55" fill="#fff" fill-opacity=".6"/><circle cx="734.8" cy="249.5" r="3.75" fill="#e15759"/>
<circle cx="510.3" cy="371.8" r="5.4" fill="#fff" fill-opacity=".4"/><circle cx="510.3" cy="371.8" r="4.5" fill="#fff" fill-opacity=".6"/><circle cx="510.3" cy="371.8" r="3.7" fill="#bab0ac"/>
<circle cx="711.3" cy="139.9" r="5.3" fill="#fff" fill-opacity=".4"/><circle cx="711.3" cy="139.9" r="4.4" fill="#fff" fill-opacity=".6"/><circle cx="711.3" cy="139.9" r="3.6" fill="#4e79a7"/>
<circle cx="742.4" cy="283" r="5.2" fill="#fff" fill-opacity=".4"/><circle cx="742.4" cy="283" r="4.3" fill="#fff" fill-opacity=".6"/><circle cx="742.4" cy="283" r="3.5" fill="#e15759"/>
<circle cx="767.6" cy="202.4" r="5.1" fill="#fff" fill-opacity=".4"/><circle cx="767.6" cy="202.4" r="4.2" fill="#fff" fill-opacity=".6"/><circle cx="767.6" cy="202.4" r="3.4" fill="#e15759"/>
<circle cx="646.5" cy="209.3" r="5.1" fill="#fff" fill-opacity=".4"/><circle cx="646.5" cy="209.3" r="4.2" fill="#fff" fill-opacity=".6"/><circle cx="646.5" cy="209.3" r="3.4" fill="#bab0ac"/>
<circle cx="755" cy="321.2" r="4.9" fill="#fff" fill-opacity=".4"/><circle cx="755" cy="321.2" r="4" fill="#fff" fill-opacity=".6"/><circle cx="755" cy="321.2" r="3.2" fill="#e15759"/>
<circle cx="509.7" cy="271" r="4.9" fill="#fff" fill-opacity=".4"/><circle cx="509.7" cy="271" r="4" fill="#fff" fill-opacity=".6"/><circle cx="509.7" cy="271" r="3.2" fill="#bab0ac"/>
<circle cx="489.7" cy="318.2" r="4.9" fill="#fff" fill-opacity=".4"/><circle cx="489.7" cy="318.2" r="4" fill="#fff" fill-opacity=".6"/><circle cx="489.7" cy="318.2" r="3.2" fill="#bab0ac"/>
<circle cx="1350.7" cy="318.2" r="4.9" fill="#fff" fill-opacity=".4"/><circle cx="1350.7" cy="318.2" r="4" fill="#fff" fill-opacity=".6"/><circle cx="1350.7" cy="318.2" r="3.2" fill="#bab0ac"/>
<circle cx="770.2" cy="227.9" r="4.8" fill="#fff" fill-opacity=".4"/><circle cx="770.2" cy="227.9" r="3.9" fill="#fff" fill-opacity=".6"/><circle cx="770.2" cy="227.9" r="3.1" fill="#bab0ac"/>
<circle cx="817.1" cy="177.5" r="4.8" fill="#fff" fill-opacity=".4"/><circle cx="817.1" cy="177.5" r="3.9" fill="#fff" fill-opacity=".6"/><circle cx="817.1" cy="177.5" r="3.1" fill="#bab0ac"/>
<circle cx="820.9" cy="201" r="4.8" fill="#fff" fill-opacity=".4"/><circle cx="820.9" cy="201" r="3.9" fill="#fff" fill-opacity=".6"/><circle cx="820.9" cy="201" r="3.1" fill="#e15759"/>
<circle cx="47.4" cy="276.9" r="4.8" fill="#fff" fill-opacity=".4"/><circle cx="47.4" cy="276.9" r="3.9" fill="#fff" fill-opacity=".6"/><circle cx="47.4" cy="276.9" r="3.1" fill="#bab0ac"/>
<circle cx="908.4" cy="276.9" r="4.8" fill="#fff" fill-opacity=".4"/><circle cx="908.4" cy="276.9" r="3.9" fill="#fff" fill-opacity=".6"/><circle cx="908.4" cy="276.9" r="3.1" fill="#bab0ac"/>
<circle cx="778.4" cy="250" r="4.7" fill="#fff" fill-opacity=".4"/><circle cx="778.4" cy="250" r="3.8" fill="#fff" fill-opacity=".6"/><circle cx="778.4" cy="250" r="3" fill="#e15759"/>
<circle cx="661.5" cy="270.3" r="4.7" fill="#fff" fill-opacity=".4"/><circle cx="661.5" cy="270.3" r="3.8" fill="#fff" fill-opacity=".6"/><circle cx="661.5" cy="270.3" r="3" fill="#e15759"/>
<circle cx="398.2" cy="110.8" r="4.7" fill="#fff" fill-opacity=".4"/><circle cx="398.2" cy="110.8" r="3.8" fill="#fff" fill-opacity=".6"/><circle cx="398.2" cy="110.8" r="3" fill="#4e79a7"/>
<circle cx="1259.2" cy="110.8" r="4.7" fill="#fff" fill-opacity=".4"/><circle cx="1259.2" cy="110.8" r="3.8" fill="#fff" fill-opacity=".6"/><circle cx="1259.2" cy="110.8" r="3" fill="#4e79a7"/>
<circle cx="755.8" cy="197.4" r="4.6" fill="#fff" fill-opacity=".4"/><circle cx="755.8" cy="197.4" r="3.7" fill="#fff" fill-opacity=".6"/><circle cx="755.8" cy="197.4" r="2.9" fill="#bab0ac"/>
<circle cx="122.6" cy="348.3" r="4.5" fill="#fff" fill-opacity=".4"/><circle cx="122.6" cy="348.3" r="3.6" fill="#fff" fill-opacity=".6"/><circle cx="122.6" cy="348.3" r="2.8" fill="#4e79a7"/>
<circle cx="983.6" cy="348.3" r="4.5" fill="#fff" fill-opacity=".4"/><circle cx="983.6" cy="348.3" r="3.6" fill="#fff" fill-opacity=".6"/><circle cx="983.6" cy="348.3" r="2.8" fill="#4e79a7"/>
<circle cx="706.7" cy="318.7" r="4.5" fill="#fff" fill-opacity=".4"/><circle cx="706.7" cy="318.7" r="3.6" fill="#fff" fill-opacity=".6"/><circle cx="706.7" cy="318.7" r="2.8" fill="#e15759"/>
<circle cx="775.5" cy="335.5" r="4.5" fill="#fff" fill-opacity=".4"/><circle cx="775.5" cy="335.5" r="3.6" fill="#fff" fill-opacity=".6"/><circle cx="775.5" cy="335.5" r="2.8" fill="#e15759"/>
<circle cx="693.4" cy="277.1" r="4.45" fill="#fff" fill-opacity=".4"/><circle cx="693.4" cy="277.1" r="3.55" fill="#fff" fill-opacity=".6"/><circle cx="693.4" cy="277.1" r="2.75" fill="#e15759"/>
<circle cx="-3.7" cy="270.1" r="4.4" fill="#fff" fill-opacity=".4"/><circle cx="-3.7" cy="270.1" r="3.5" fill="#fff" fill-opacity=".6"/><circle cx="-3.7" cy="270.1" r="2.7" fill="#bab0ac"/>
<circle cx="857.3" cy="270.1" r="4.4" fill="#fff" fill-opacity=".4"/><circle cx="857.3" cy="270.1" r="3.5" fill="#fff" fill-opacity=".6"/><circle cx="857.3" cy="270.1" r="2.7" fill="#bab0ac"/>
<circle cx="105.3" cy="184" r="4.4" fill="#fff" fill-opacity=".4"/><circle cx="105.3" cy="184" r="3.5" fill="#fff" fill-opacity=".6"/><circle cx="105.3" cy="184" r="2.7" fill="#4e79a7"/>
<circle cx="966.3" cy="184" r="4.4" fill="#fff" fill-opacity=".4"/><circle cx="966.3" cy="184" r="3.5" fill="#fff" fill-opacity=".6"/><circle cx="966.3" cy="184" r="2.7" fill="#4e79a7"/>
<circle cx="724.3" cy="163.8" r="4.3" fill="#fff" fill-opacity=".4"/><circle cx="724.3" cy="163.8" r="3.4" fill="#fff" fill-opacity=".6"/><circle cx="724.3" cy="163.8" r="2.6" fill="#4e79a7"/>
<circle cx="651.4" cy="269.6" r="4.3" fill="#fff" fill-opacity=".4"/><circle cx="651.4" cy="269.6" r="3.4" fill="#fff" fill-opacity=".6"/><circle cx="651.4" cy="269.6" r="2.6" fill="#e15759"/>
<circle cx="687.9" cy="246.5" r="4.2" fill="#fff" fill-opacity=".4"/><circle cx="687.9" cy="246.5" r="3.3" fill="#fff" fill-opacity=".6"/><circle cx="687.9" cy="246.5" r="2.5" fill="#e15759"/>
<circle cx="744.8" cy="319.8" r="4.2" fill="#fff" fill-opacity=".4"/><circle cx="744.8" cy="319.8" r="3.3" fill="#fff" fill-opacity=".6"/><circle cx="744.8" cy="319.8" r="2.5" fill="#e15759"/>
<circle cx="676.3" cy="140.6" r="4.1" fill="#fff" fill-opacity=".4"/><circle cx="676.3" cy="140.6" r="3.2" fill="#fff" fill-opacity=".6"/><circle cx="676.3" cy="140.6" r="2.4" fill="#4e79a7"/>
<circle cx="658.8" cy="243.4" r="4.1" fill="#fff" fill-opacity=".4"/><circle cx="658.8" cy="243.4" r="3.2" fill="#fff" fill-opacity=".6"/><circle cx="658.8" cy="243.4" r="2.4" fill="#e15759"/>
<circle cx="661.3" cy="257.1" r="4.1" fill="#fff" fill-opacity=".4"/><circle cx="661.3" cy="257.1" r="3.2" fill="#fff" fill-opacity=".6"/><circle cx="661.3" cy="257.1" r="2.4" fill="#e15759"/>
<circle cx="724.5" cy="324.2" r="4" fill="#fff" fill-opacity=".4"/><circle cx="724.5" cy="324.2" r="3.1" fill="#fff" fill-opacity=".6"/><circle cx="724.5" cy="324.2" r="2.3" fill="#e15759"/>
<circle cx="736" cy="334.3" r="4" fill="#fff" fill-opacity=".4"/><circle cx="736" cy="334.3" r="3.1" fill="#fff" fill-opacity=".6"/><circle cx="736" cy="334.3" r="2.3" fill="#e15759"/>
<circle cx="481.3" cy="237.3" r="4" fill="#fff" fill-opacity=".4"/><circle cx="481.3" cy="237.3" r="3.1" fill="#fff" fill-opacity=".6"/><circle cx="481.3" cy="237.3" r="2.3" fill="#4e79a7"/>
<circle cx="1342.3" cy="237.3" r="4" fill="#fff" fill-opacity=".4"/><circle cx="1342.3" cy="237.3" r="3.1" fill="#fff" fill-opacity=".6"/><circle cx="1342.3" cy="237.3" r="2.3" fill="#4e79a7"/>
<circle cx="447.2" cy="251" r="4" fill="#fff" fill-opacity=".4"/><circle cx="447.2" cy="251" r="3.1" fill="#fff" fill-opacity=".6"/><circle cx="447.2" cy="251" r="2.3" fill="#e15759"/>
<circle cx="1308.2" cy="251" r="4" fill="#fff" fill-opacity=".4"/><circle cx="1308.2" cy="251" r="3.1" fill="#fff" fill-opacity=".6"/><circle cx="1308.2" cy="251" r="2.3" fill="#e15759"/>
<circle cx="628.1" cy="251.4" r="3.95" fill="#fff" fill-opacity=".4"/><circle cx="628.1" cy="251.4" r="3.05" fill="#fff" fill-opacity=".6"/><circle cx="628.1" cy="251.4" r="2.25" fill="#e15759"/>
<circle cx="831" cy="153.2" r="3.9" fill="#fff" fill-opacity=".4"/><circle cx="831" cy="153.2" r="3" fill="#fff" fill-opacity=".6"/><circle cx="831" cy="153.2" r="2.2" fill="#bab0ac"/>
<circle cx="490.8" cy="240.7" r="3.9" fill="#fff" fill-opacity=".4"/><circle cx="490.8" cy="240.7" r="3" fill="#fff" fill-opacity=".6"/><circle cx="490.8" cy="240.7" r="2.2" fill="#bab0ac"/>
<circle cx="1351.8" cy="240.7" r="3.9" fill="#fff" fill-opacity=".4"/><circle cx="1351.8" cy="240.7" r="3" fill="#fff" fill-opacity=".6"/><circle cx="1351.8" cy="240.7" r="2.2" fill="#bab0ac"/>
<circle cx="496.5" cy="241.3" r="3.9" fill="#fff" fill-opacity=".4"/><circle cx="496.5" cy="241.3" r="3" fill="#fff" fill-opacity=".6"/><circle cx="496.5" cy="241.3" r="2.2" fill="#bab0ac"/>
<circle cx="1357.5" cy="241.3" r="3.9" fill="#fff" fill-opacity=".4"/><circle cx="1357.5" cy="241.3" r="3" fill="#fff" fill-opacity=".6"/><circle cx="1357.5" cy="241.3" r="2.2" fill="#bab0ac"/>
<circle cx="476.8" cy="290.3" r="3.9" fill="#fff" fill-opacity=".4"/><circle cx="476.8" cy="290.3" r="3" fill="#fff" fill-opacity=".6"/><circle cx="476.8" cy="290.3" r="2.2" fill="#bab0ac"/>
<circle cx="1337.8" cy="290.3" r="3.9" fill="#fff" fill-opacity=".4"/><circle cx="1337.8" cy="290.3" r="3" fill="#fff" fill-opacity=".6"/><circle cx="1337.8" cy="290.3" r="2.2" fill="#bab0ac"/>
<circle cx="498.5" cy="344.8" r="3.9" fill="#fff" fill-opacity=".4"/><circle cx="498.5" cy="344.8" r="3" fill="#fff" fill-opacity=".6"/><circle cx="498.5" cy="344.8" r="2.2" fill="#4e79a7"/>
<circle cx="52.9" cy="257.1" r="3.8" fill="#fff" fill-opacity=".4"/><circle cx="52.9" cy="257.1" r="2.9" fill="#fff" fill-opacity=".6"/><circle cx="52.9" cy="257.1" r="2.1" fill="#bab0ac"/>
<circle cx="913.9" cy="257.1" r="3.8" fill="#fff" fill-opacity=".4"/><circle cx="913.9" cy="257.1" r="2.9" fill="#fff" fill-opacity=".6"/><circle cx="913.9" cy="257.1" r="2.1" fill="#bab0ac"/>
<circle cx="709.1" cy="248.9" r="3.8" fill="#fff" fill-opacity=".4"/><circle cx="709.1" cy="248.9" r="2.9" fill="#fff" fill-opacity=".6"/><circle cx="709.1" cy="248.9" r="2.1" fill="#e15759"/>
<circle cx="715.9" cy="183.8" r="3.7" fill="#fff" fill-opacity=".4"/><circle cx="715.9" cy="183.8" r="2.8" fill="#fff" fill-opacity=".6"/><circle cx="715.9" cy="183.8" r="2" fill="#4e79a7"/>
<circle cx="778.6" cy="181.8" r="3.7" fill="#fff" fill-opacity=".4"/><circle cx="778.6" cy="181.8" r="2.8" fill="#fff" fill-opacity=".6"/><circle cx="778.6" cy="181.8" r="2" fill="#bab0ac"/>
<circle cx="638" cy="262.1" r="3.7" fill="#fff" fill-opacity=".4"/><circle cx="638" cy="262.1" r="2.8" fill="#fff" fill-opacity=".6"/><circle cx="638" cy="262.1" r="2" fill="#e15759"/>
<circle cx="737" cy="270.6" r="3.7" fill="#fff" fill-opacity=".4"/><circle cx="737" cy="270.6" r="2.8" fill="#fff" fill-opacity=".6"/><circle cx="737" cy="270.6" r="2" fill="#e15759"/>
<circle cx="674.8" cy="146.8" r="3.6" fill="#fff" fill-opacity=".4"/><circle cx="674.8" cy="146.8" r="2.7" fill="#fff" fill-opacity=".6"/><circle cx="674.8" cy="146.8" r="1.9" fill="#4e79a7"/>
<circle cx="645.1" cy="180.1" r="3.6" fill="#fff" fill-opacity=".4"/><circle cx="645.1" cy="180.1" r="2.7" fill="#fff" fill-opacity=".6"/><circle cx="645.1" cy="180.1" r="1.9" fill="#4e79a7"/>
<circle cx="686.8" cy="196.5" r="3.6" fill="#fff" fill-opacity=".4"/><circle cx="686.8" cy="196.5" r="2.7" fill="#fff" fill-opacity=".6"/><circle cx="686.8" cy="196.5" r="1.9" fill="#bab0ac"/>
<circle cx="700.6" cy="149.9" r="3.6" fill="#fff" fill-opacity=".4"/><circle cx="700.6" cy="149.9" r="2.7" fill="#fff" fill-opacity=".6"/><circle cx="700.6" cy="149.9" r="1.9" fill="#4e79a7"/>
<circle cx="711" cy="159.3" r="3.6" fill="#fff" fill-opacity=".4"/><circle cx="711" cy="159.3" r="2.7" fill="#fff" fill-opacity=".6"/><circle cx="711" cy="159.3" r="1.9" fill="#4e79a7"/>
<circle cx="731" cy="136.4" r="3.6" fill="#fff" fill-opacity=".4"/><circle cx="731" cy="136.4" r="2.7" fill="#fff" fill-opacity=".6"/><circle cx="731" cy="136.4" r="1.9" fill="#4e79a7"/>
<circle cx="793" cy="228.6" r="3.6" fill="#fff" fill-opacity=".4"/><circle cx="793" cy="228.6" r="2.7" fill="#fff" fill-opacity=".6"/><circle cx="793" cy="228.6" r="1.9" fill="#bab0ac"/>
<circle cx="669.6" cy="262.5" r="3.6" fill="#fff" fill-opacity=".4"/><circle cx="669.6" cy="262.5" r="2.7" fill="#fff" fill-opacity=".6"/><circle cx="669.6" cy="262.5" r="1.9" fill="#e15759"/>
<circle cx="768.1" cy="280.9" r="3.6" fill="#fff" fill-opacity=".4"/><circle cx="768.1" cy="280.9" r="2.7" fill="#fff" fill-opacity=".6"/><circle cx="768.1" cy="280.9" r="1.9" fill="#e15759"/>
<circle cx="709.5" cy="74" r="3.5" fill="#fff" fill-opacity=".4"/><circle cx="709.5" cy="74" r="2.6" fill="#fff" fill-opacity=".6"/><circle cx="709.5" cy="74" r="1.8" fill="#4e79a7"/>
<circle cx="508.2" cy="328.3" r="3.5" fill="#fff" fill-opacity=".4"/><circle cx="508.2" cy="328.3" r="2.6" fill="#fff" fill-opacity=".6"/><circle cx="508.2" cy="328.3" r="1.8" fill="#bab0ac"/>
<circle cx="75.6" cy="232.8" r="3.4" fill="#fff" fill-opacity=".4"/><circle cx="75.6" cy="232.8" r="2.5" fill="#fff" fill-opacity=".6"/><circle cx="75.6" cy="232.8" r="1.7" fill="#4e79a7"/>
<circle cx="936.6" cy="232.8" r="3.4" fill="#fff" fill-opacity=".4"/><circle cx="936.6" cy="232.8" r="2.5" fill="#fff" fill-opacity=".6"/><circle cx="936.6" cy="232.8" r="1.7" fill="#4e79a7"/>
<circle cx="144.5" cy="301.2" r="3.4" fill="#fff" fill-opacity=".4"/><circle cx="144.5" cy="301.2" r="2.5" fill="#fff" fill-opacity=".6"/><circle cx="144.5" cy="301.2" r="1.7" fill="#bab0ac"/>
<circle cx="1005.5" cy="301.2" r="3.4" fill="#fff" fill-opacity=".4"/><circle cx="1005.5" cy="301.2" r="2.5" fill="#fff" fill-opacity=".6"/><circle cx="1005.5" cy="301.2" r="1.7" fill="#bab0ac"/>
<circle cx="735.7" cy="292" r="3.4" fill="#fff" fill-opacity=".4"/><circle cx="735.7" cy="292" r="2.5" fill="#fff" fill-opacity=".6"/><circle cx="735.7" cy="292" r="1.7" fill="#e15759"/>
<circle cx="735.2" cy="295.3" r="3.4" fill="#fff" fill-opacity=".4"/><circle cx="735.2" cy="295.3" r="2.5" fill="#fff" fill-opacity=".6"/><circle cx="735.2" cy="295.3" r="1.7" fill="#e15759"/>
<circle cx="455.7" cy="251.7" r="3.4" fill="#fff" fill-opacity=".4"/><circle cx="455.7" cy="251.7" r="2.5" fill="#fff" fill-opacity=".6"/><circle cx="455.7" cy="251.7" r="1.7" fill="#bab0ac"/>
<circle cx="1316.7" cy="251.7" r="3.4" fill="#fff" fill-opacity=".4"/><circle cx="1316.7" cy="251.7" r="2.5" fill="#fff" fill-opacity=".6"/><circle cx="1316.7" cy="251.7" r="1.7" fill="#bab0ac"/>
<circle cx="699.4" cy="157.8" r="3.3" fill="#fff" fill-opacity=".4"/><circle cx="699.4" cy="157.8" r="2.4" fill="#fff" fill-opacity=".6"/><circle cx="699.4" cy="157.8" r="1.6" fill="#4e79a7"/>
<circle cx="713.8" cy="170.3" r="3.3" fill="#fff" fill-opacity=".4"/><circle cx="713.8" cy="170.3" r="2.4" fill="#fff" fill-opacity=".6"/><circle cx="713.8" cy="170.3" r="1.6" fill="#4e79a7"/>
<circle cx="722.8" cy="174.9" r="3.3" fill="#fff" fill-opacity=".4"/><circle cx="722.8" cy="174.9" r="2.4" fill="#fff" fill-opacity=".6"/><circle cx="722.8" cy="174.9" r="1.6" fill="#4e79a7"/>
<circle cx="-23.4" cy="188.3" r="3.3" fill="#fff" fill-opacity=".4"/><circle cx="-23.4" cy="188.3" r="2.4" fill="#fff" fill-opacity=".6"/><circle cx="-23.4" cy="188.3" r="1.6" fill="#e15759"/>
<circle cx="837.6" cy="188.3" r="3.3" fill="#fff" fill-opacity=".4"/><circle cx="837.6" cy="188.3" r="2.4" fill="#fff" fill-opacity=".6"/><circle cx="837.6" cy="188.3" r="1.6" fill="#e15759"/>
<circle cx="683.4" cy="160.9" r="3.2" fill="#fff" fill-opacity=".4"/><circle cx="683.4" cy="160.9" r="2.3" fill="#fff" fill-opacity=".6"/><circle cx="683.4" cy="160.9" r="1.5" fill="#4e79a7"/>
<circle cx="747.5" cy="209.6" r="3.2" fill="#fff" fill-opacity=".4"/><circle cx="747.5" cy="209.6" r="2.3" fill="#fff" fill-opacity=".6"/><circle cx="747.5" cy="209.6" r="1.5" fill="#bab0ac"/>
<circle cx="755.1" cy="249" r="3.2" fill="#fff" fill-opacity=".4"/><circle cx="755.1" cy="249" r="2.3" fill="#fff" fill-opacity=".6"/><circle cx="755.1" cy="249" r="1.5" fill="#e15759"/>
<circle cx="450.7" cy="254.5" r="3.2" fill="#fff" fill-opacity=".4"/><circle cx="450.7" cy="254.5" r="2.3" fill="#fff" fill-opacity=".6"/><circle cx="450.7" cy="254.5" r="1.5" fill="#bab0ac"/>
<circle cx="1311.7" cy="254.5" r="3.2" fill="#fff" fill-opacity=".4"/><circle cx="1311.7" cy="254.5" r="2.3" fill="#fff" fill-opacity=".6"/><circle cx="1311.7" cy="254.5" r="1.5" fill="#bab0ac"/>
<circle cx="460.8" cy="257.2" r="3.2" fill="#fff" fill-opacity=".4"/><circle cx="460.8" cy="257.2" r="2.3" fill="#fff" fill-opacity=".6"/><circle cx="460.8" cy="257.2" r="1.5" fill="#bab0ac"/>
<circle cx="1321.8" cy="257.2" r="3.2" fill="#fff" fill-opacity=".4"/><circle cx="1321.8" cy="257.2" r="2.3" fill="#fff" fill-opacity=".6"/><circle cx="1321.8" cy="257.2" r="1.5" fill="#bab0ac"/>
<circle cx="524.5" cy="345.2" r="3.2" fill="#fff" fill-opacity=".4"/><circle cx="524.5" cy="345.2" r="2.3" fill="#fff" fill-opacity=".6"/><circle cx="524.5" cy="345.2" r="1.5" fill="#bab0ac"/>
<circle cx="48.4" cy="239.8" r="3.1" fill="#fff" fill-opacity=".45"/><circle cx="48.4" cy="239.8" r="2.3" fill="#fff" fill-opacity=".55"/>
<circle cx="909.4" cy="239.8" r="3.1" fill="#fff" fill-opacity=".45"/><circle cx="909.4" cy="239.8" r="2.3" fill="#fff" fill-opacity=".55"/>
<circle cx="706.3" cy="219.9" r="3.1" fill="#fff" fill-opacity=".45"/><circle cx="706.3" cy="219.9" r="2.3" fill="#fff" fill-opacity=".55"/>
<circle cx="635.9" cy="267" r="3.1" fill="#fff" fill-opacity=".45"/><circle cx="635.9" cy="267" r="2.3" fill="#fff" fill-opacity=".55"/>
<circle cx="666.9" cy="269.3" r="3.1" fill="#fff" fill-opacity=".45"/><circle cx="666.9" cy="269.3" r="2.3" fill="#fff" fill-opacity=".55"/>
<circle cx="702.5" cy="286.5" r="3.1" fill="#fff" fill-opacity=".45"/><circle cx="702.5" cy="286.5" r="2.3" fill="#fff" fill-opacity=".55"/>
<circle cx="686.3" cy="100.5" r="3" fill="#fff" fill-opacity=".45"/><circle cx="686.3" cy="100.5" r="2.2" fill="#fff" fill-opacity=".55"/>
<circle cx="726.7" cy="93.5" r="3" fill="#fff" fill-opacity=".45"/><circle cx="726.7" cy="93.5" r="2.2" fill="#fff" fill-opacity=".55"/>
<circle cx="463.2" cy="263.5" r="3" fill="#fff" fill-opacity=".45"/><circle cx="463.2" cy="263.5" r="2.2" fill="#fff" fill-opacity=".55"/>
<circle cx="1324.2" cy="263.5" r="3" fill="#fff" fill-opacity=".45"/><circle cx="1324.2" cy="263.5" r="2.2" fill="#fff" fill-opacity=".55"/>
<circle cx="470.3" cy="267.8" r="3" fill="#fff" fill-opacity=".45"/><circle cx="470.3" cy="267.8" r="2.2" fill="#fff" fill-opacity=".55"/>
<circle cx="1331.3" cy="267.8" r="3" fill="#fff" fill-opacity=".45"/><circle cx="1331.3" cy="267.8" r="2.2" fill="#fff" fill-opacity=".55"/>
<circle cx="685.9" cy="124.9" r="2.95" fill="#fff" fill-opacity=".45"/><circle cx="685.9" cy="124.9" r="2.15" fill="#fff" fill-opacity=".55"/>
<circle cx="710.6" cy="153.5" r="2.95" fill="#fff" fill-opacity=".45"/><circle cx="710.6" cy="153.5" r="2.15" fill="#fff" fill-opacity=".55"/>
<circle cx="722.1" cy="128.1" r="2.95" fill="#fff" fill-opacity=".45"/><circle cx="722.1" cy="128.1" r="2.15" fill="#fff" fill-opacity=".55"/>
<circle cx="750.3" cy="200.6" r="2.95" fill="#fff" fill-opacity=".45"/><circle cx="750.3" cy="200.6" r="2.15" fill="#fff" fill-opacity=".55"/>
<circle cx="751" cy="210.4" r="2.95" fill="#fff" fill-opacity=".45"/><circle cx="751" cy="210.4" r="2.15" fill="#fff" fill-opacity=".55"/>
<circle cx="806.6" cy="184.5" r="2.95" fill="#fff" fill-opacity=".45"/><circle cx="806.6" cy="184.5" r="2.15" fill="#fff" fill-opacity=".55"/>
<circle cx="-17.4" cy="177.6" r="2.95" fill="#fff" fill-opacity=".45"/><circle cx="-17.4" cy="177.6" r="2.15" fill="#fff" fill-opacity=".55"/>
<circle cx="843.6" cy="177.6" r="2.95" fill="#fff" fill-opacity=".45"/><circle cx="843.6" cy="177.6" r="2.15" fill="#fff" fill-opacity=".55"/>
<circle cx="641.9" cy="272.3" r="2.95" fill="#fff" fill-opacity=".45"/><circle cx="641.9" cy="272.3" r="2.15" fill="#fff" fill-opacity=".55"/>
<circle cx="715.3" cy="270.9" r="2.95" fill="#fff" fill-opacity=".45"/><circle cx="715.3" cy="270.9" r="2.15" fill="#fff" fill-opacity=".55"/>
<circle cx="-21.2" cy="277.5" r="2.9" fill="#fff" fill-opacity=".45"/><circle cx="-21.2" cy="277.5" r="2.1" fill="#fff" fill-opacity=".55"/>
<circle cx="839.8" cy="277.5" r="2.9" fill="#fff" fill-opacity=".45"/><circle cx="839.8" cy="277.5" r="2.1" fill="#fff" fill-opacity=".55"/>
<circle cx="103.5" cy="309" r="2.9" fill="#fff" fill-opacity=".45"/><circle cx="103.5" cy="309" r="2.1" fill="#fff" fill-opacity=".55"/>
<circle cx="964.5" cy="309" r="2.9" fill="#fff" fill-opacity=".45"/><circle cx="964.5" cy="309" r="2.1" fill="#fff" fill-opacity=".55"/>
<circle cx="186.2" cy="310.8" r="2.9" fill="#fff" fill-opacity=".45"/><circle cx="186.2" cy="310.8" r="2.1" fill="#fff" fill-opacity=".55"/>
<circle cx="1047.2" cy="310.8" r="2.9" fill="#fff" fill-opacity=".45"/><circle cx="1047.2" cy="310.8" r="2.1" fill="#fff" fill-opacity=".55"/>
<circle cx="215.3" cy="400.5" r="2.9" fill="#fff" fill-opacity=".45"/><circle cx="215.3" cy="400.5" r="2.1" fill="#fff" fill-opacity=".55"/>
<circle cx="1076.3" cy="400.5" r="2.9" fill="#fff" fill-opacity=".45"/><circle cx="1076.3" cy="400.5" r="2.1" fill="#fff" fill-opacity=".55"/>
<circle cx="478.7" cy="243.7" r="2.9" fill="#fff" fill-opacity=".45"/><circle cx="478.7" cy="243.7" r="2.1" fill="#fff" fill-opacity=".55"/>
<circle cx="1339.7" cy="243.7" r="2.9" fill="#fff" fill-opacity=".45"/><circle cx="1339.7" cy="243.7" r="2.1" fill="#fff" fill-opacity=".55"/>
<circle cx="504.7" cy="243.3" r="2.9" fill="#fff" fill-opacity=".45"/><circle cx="504.7" cy="243.3" r="2.1" fill="#fff" fill-opacity=".55"/>
<circle cx="703.4" cy="164.4" r="2.8" fill="#fff" fill-opacity=".45"/><circle cx="703.4" cy="164.4" r="2" fill="#fff" fill-opacity=".55"/>
<circle cx="706.9" cy="169" r="2.8" fill="#fff" fill-opacity=".45"/><circle cx="706.9" cy="169" r="2" fill="#fff" fill-opacity=".55"/>
<circle cx="724" cy="120.9" r="2.8" fill="#fff" fill-opacity=".45"/><circle cx="724" cy="120.9" r="2" fill="#fff" fill-opacity=".55"/>
<circle cx="768.3" cy="176.6" r="2.8" fill="#fff" fill-opacity=".45"/><circle cx="768.3" cy="176.6" r="2" fill="#fff" fill-opacity=".55"/>
<circle cx="742.9" cy="198.6" r="2.8" fill="#fff" fill-opacity=".45"/><circle cx="742.9" cy="198.6" r="2" fill="#fff" fill-opacity=".55"/>
<circle cx="798.7" cy="239.2" r="2.8" fill="#fff" fill-opacity=".45"/><circle cx="798.7" cy="239.2" r="2" fill="#fff" fill-opacity=".55"/>
<circle cx="51.5" cy="284.6" r="2.8" fill="#fff" fill-opacity=".45"/><circle cx="51.5" cy="284.6" r="2" fill="#fff" fill-opacity=".55"/>
<circle cx="912.5" cy="284.6" r="2.8" fill="#fff" fill-opacity=".45"/><circle cx="912.5" cy="284.6" r="2" fill="#fff" fill-opacity=".55"/>
<circle cx="77.1" cy="276.8" r="2.8" fill="#fff" fill-opacity=".45"/><circle cx="77.1" cy="276.8" r="2" fill="#fff" fill-opacity=".55"/>
<circle cx="938.1" cy="276.8" r="2.8" fill="#fff" fill-opacity=".45"/><circle cx="938.1" cy="276.8" r="2" fill="#fff" fill-opacity=".55"/>
<circle cx="638.6" cy="240.4" r="2.8" fill="#fff" fill-opacity=".45"/><circle cx="638.6" cy="240.4" r="2" fill="#fff" fill-opacity=".55"/>
<circle cx="646" cy="136.9" r="2.75" fill="#fff" fill-opacity=".45"/><circle cx="646" cy="136.9" r="1.95" fill="#fff" fill-opacity=".55"/>
<circle cx="716" cy="178" r="2.75" fill="#fff" fill-opacity=".45"/><circle cx="716" cy="178" r="1.95" fill="#fff" fill-opacity=".55"/>
<circle cx="712.1" cy="181.1" r="2.75" fill="#fff" fill-opacity=".45"/><circle cx="712.1" cy="181.1" r="1.95" fill="#fff" fill-opacity=".55"/>
<circle cx="732.1" cy="158.1" r="2.75" fill="#fff" fill-opacity=".45"/><circle cx="732.1" cy="158.1" r="1.95" fill="#fff" fill-opacity=".55"/>
<circle cx="726.3" cy="112.8" r="2.75" fill="#fff" fill-opacity=".45"/><circle cx="726.3" cy="112.8" r="1.95" fill="#fff" fill-opacity=".55"/>
<circle cx="770.5" cy="181.5" r="2.75" fill="#fff" fill-opacity=".45"/><circle cx="770.5" cy="181.5" r="1.95" fill="#fff" fill-opacity=".55"/>
<circle cx="777.6" cy="214.1" r="2.75" fill="#fff" fill-opacity=".45"/><circle cx="777.6" cy="214.1" r="1.95" fill="#fff" fill-opacity=".55"/>
<circle cx="149.4" cy="255.3" r="2.75" fill="#fff" fill-opacity=".45"/><circle cx="149.4" cy="255.3" r="1.95" fill="#fff" fill-opacity=".55"/>
<circle cx="1010.4" cy="255.3" r="2.75" fill="#fff" fill-opacity=".45"/><circle cx="1010.4" cy="255.3" r="1.95" fill="#fff" fill-opacity=".55"/>
<circle cx="162.9" cy="269.7" r="2.75" fill="#fff" fill-opacity=".45"/><circle cx="162.9" cy="269.7" r="1.95" fill="#fff" fill-opacity=".55"/>
<circle cx="1023.9" cy="269.7" r="2.75" fill="#fff" fill-opacity=".45"/><circle cx="1023.9" cy="269.7" r="1.95" fill="#fff" fill-opacity=".55"/>
<circle cx="202.2" cy="325" r="2.75" fill="#fff" fill-opacity=".45"/><circle cx="202.2" cy="325" r="1.95" fill="#fff" fill-opacity=".55"/>
<circle cx="1063.2" cy="325" r="2.75" fill="#fff" fill-opacity=".45"/><circle cx="1063.2" cy="325" r="1.95" fill="#fff" fill-opacity=".55"/>
<circle cx="197.9" cy="339.3" r="2.75" fill="#fff" fill-opacity=".45"/><circle cx="197.9" cy="339.3" r="1.95" fill="#fff" fill-opacity=".55"/>
<circle cx="1058.9" cy="339.3" r="2.75" fill="#fff" fill-opacity=".45"/><circle cx="1058.9" cy="339.3" r="1.95" fill="#fff" fill-opacity=".55"/>
<circle cx="228.8" cy="331" r="2.75" fill="#fff" fill-opacity=".45"/><circle cx="228.8" cy="331" r="1.95" fill="#fff" fill-opacity=".55"/>
<circle cx="1089.8" cy="331" r="2.75" fill="#fff" fill-opacity=".45"/><circle cx="1089.8" cy="331" r="1.95" fill="#fff" fill-opacity=".55"/>
<circle cx="245.2" cy="339.6" r="2.75" fill="#fff" fill-opacity=".45"/><circle cx="245.2" cy="339.6" r="1.95" fill="#fff" fill-opacity=".55"/>
<circle cx="1106.2" cy="339.6" r="2.75" fill="#fff" fill-opacity=".45"/><circle cx="1106.2" cy="339.6" r="1.95" fill="#fff" fill-opacity=".55"/>
<circle cx="251.7" cy="320.6" r="2.75" fill="#fff" fill-opacity=".45"/><circle cx="251.7" cy="320.6" r="1.95" fill="#fff" fill-opacity=".55"/>
<circle cx="1112.7" cy="320.6" r="2.75" fill="#fff" fill-opacity=".45"/><circle cx="1112.7" cy="320.6" r="1.95" fill="#fff" fill-opacity=".55"/>
<circle cx="284.9" cy="282.9" r="2.75" fill="#fff" fill-opacity=".45"/><circle cx="284.9" cy="282.9" r="1.95" fill="#fff" fill-opacity=".55"/>
<circle cx="1145.9" cy="282.9" r="2.75" fill="#fff" fill-opacity=".45"/><circle cx="1145.9" cy="282.9" r="1.95" fill="#fff" fill-opacity=".55"/>
<circle cx="306.5" cy="330.3" r="2.75" fill="#fff" fill-opacity=".45"/><circle cx="306.5" cy="330.3" r="1.95" fill="#fff" fill-opacity=".55"/>
<circle cx="1167.5" cy="330.3" r="2.75" fill="#fff" fill-opacity=".45"/><circle cx="1167.5" cy="330.3" r="1.95" fill="#fff" fill-opacity=".55"/>
<circle cx="629" cy="255" r="2.75" fill="#fff" fill-opacity=".45"/><circle cx="629" cy="255" r="1.95" fill="#fff" fill-opacity=".55"/>
<circle cx="629.6" cy="258.5" r="2.75" fill="#fff" fill-opacity=".45"/><circle cx="629.6" cy="258.5" r="1.95" fill="#fff" fill-opacity=".55"/>
<circle cx="679.9" cy="287.1" r="2.75" fill="#fff" fill-opacity=".45"/><circle cx="679.9" cy="287.1" r="1.95" fill="#fff" fill-opacity=".55"/>
<circle cx="689.1" cy="283.8" r="2.75" fill="#fff" fill-opacity=".45"/><circle cx="689.1" cy="283.8" r="1.95" fill="#fff" fill-opacity=".55"/>
<circle cx="692.6" cy="288.8" r="2.75" fill="#fff" fill-opacity=".45"/><circle cx="692.6" cy="288.8" r="1.95" fill="#fff" fill-opacity=".55"/>
<circle cx="705.3" cy="339.8" r="2.75" fill="#fff" fill-opacity=".45"/><circle cx="705.3" cy="339.8" r="1.95" fill="#fff" fill-opacity=".55"/>
<circle cx="720.5" cy="342" r="2.75" fill="#fff" fill-opacity=".45"/><circle cx="720.5" cy="342" r="1.95" fill="#fff" fill-opacity=".55"/>
<circle cx="732" cy="361.3" r="2.75" fill="#fff" fill-opacity=".45"/><circle cx="732" cy="361.3" r="1.95" fill="#fff" fill-opacity=".55"/>
<circle cx="796.8" cy="299" r="2.75" fill="#fff" fill-opacity=".45"/><circle cx="796.8" cy="299" r="1.95" fill="#fff" fill-opacity=".55"/>
<circle cx="477.5" cy="226.7" r="2.75" fill="#fff" fill-opacity=".45"/><circle cx="477.5" cy="226.7" r="1.95" fill="#fff" fill-opacity=".55"/>
<circle cx="1338.5" cy="226.7" r="2.75" fill="#fff" fill-opacity=".45"/><circle cx="1338.5" cy="226.7" r="1.95" fill="#fff" fill-opacity=".55"/>
<circle cx="469.7" cy="240.7" r="2.75" fill="#fff" fill-opacity=".45"/><circle cx="469.7" cy="240.7" r="1.95" fill="#fff" fill-opacity=".55"/>
<circle cx="1330.7" cy="240.7" r="2.75" fill="#fff" fill-opacity=".45"/><circle cx="1330.7" cy="240.7" r="1.95" fill="#fff" fill-opacity=".55"/>
<circle cx="529.7" cy="371.3" r="2.75" fill="#fff" fill-opacity=".45"/><circle cx="529.7" cy="371.3" r="1.95" fill="#fff" fill-opacity=".55"/>
<circle cx="653.4" cy="132.8" r="2.75" fill="#fff" fill-opacity=".45"/><circle cx="653.4" cy="132.8" r="1.95" fill="#fff" fill-opacity=".55"/>
<circle cx="678.8" cy="150.5" r="2.75" fill="#fff" fill-opacity=".45"/><circle cx="678.8" cy="150.5" r="1.95" fill="#fff" fill-opacity=".55"/>
<circle cx="681.9" cy="171.3" r="2.75" fill="#fff" fill-opacity=".45"/><circle cx="681.9" cy="171.3" r="1.95" fill="#fff" fill-opacity=".55"/>
<circle cx="668" cy="175.1" r="2.75" fill="#fff" fill-opacity=".45"/><circle cx="668" cy="175.1" r="1.95" fill="#fff" fill-opacity=".55"/>
<circle cx="698.6" cy="195.8" r="2.75" fill="#fff" fill-opacity=".45"/><circle cx="698.6" cy="195.8" r="1.95" fill="#fff" fill-opacity=".55"/>
<circle cx="698.9" cy="163.5" r="2.75" fill="#fff" fill-opacity=".45"/><circle cx="698.9" cy="163.5" r="1.95" fill="#fff" fill-opacity=".55"/>
<circle cx="709.9" cy="174.1" r="2.75" fill="#fff" fill-opacity=".45"/><circle cx="709.9" cy="174.1" r="1.95" fill="#fff" fill-opacity=".55"/>
<circle cx="786.5" cy="225" r="2.75" fill="#fff" fill-opacity=".45"/><circle cx="786.5" cy="225" r="1.95" fill="#fff" fill-opacity=".55"/>
<circle cx="208.8" cy="273.5" r="2.75" fill="#fff" fill-opacity=".45"/><circle cx="208.8" cy="273.5" r="1.95" fill="#fff" fill-opacity=".55"/>
<circle cx="1069.8" cy="273.5" r="2.75" fill="#fff" fill-opacity=".45"/><circle cx="1069.8" cy="273.5" r="1.95" fill="#fff" fill-opacity=".55"/>
<circle cx="255.9" cy="322.3" r="2.75" fill="#fff" fill-opacity=".45"/><circle cx="255.9" cy="322.3" r="1.95" fill="#fff" fill-opacity=".55"/>
<circle cx="1116.9" cy="322.3" r="2.75" fill="#fff" fill-opacity=".45"/><circle cx="1116.9" cy="322.3" r="1.95" fill="#fff" fill-opacity=".55"/>
<circle cx="765" cy="260.4" r="2.75" fill="#fff" fill-opacity=".45"/><circle cx="765" cy="260.4" r="1.95" fill="#fff" fill-opacity=".55"/>
<circle cx="767.8" cy="315.8" r="2.75" fill="#fff" fill-opacity=".45"/><circle cx="767.8" cy="315.8" r="1.95" fill="#fff" fill-opacity=".55"/>
<circle cx="739.3" cy="353.7" r="2.75" fill="#fff" fill-opacity=".45"/><circle cx="739.3" cy="353.7" r="1.95" fill="#fff" fill-opacity=".55"/>
<circle cx="801.8" cy="337.3" r="2.75" fill="#fff" fill-opacity=".45"/><circle cx="801.8" cy="337.3" r="1.95" fill="#fff" fill-opacity=".55"/>
<circle cx="509.2" cy="206" r="2.75" fill="#fff" fill-opacity=".45"/><circle cx="509.2" cy="206" r="1.95" fill="#fff" fill-opacity=".55"/>
<circle cx="492.5" cy="234.3" r="2.75" fill="#fff" fill-opacity=".45"/><circle cx="492.5" cy="234.3" r="1.95" fill="#fff" fill-opacity=".55"/>
<circle cx="1353.5" cy="234.3" r="2.75" fill="#fff" fill-opacity=".45"/><circle cx="1353.5" cy="234.3" r="1.95" fill="#fff" fill-opacity=".55"/>
<circle cx="517.5" cy="250.3" r="2.75" fill="#fff" fill-opacity=".45"/><circle cx="517.5" cy="250.3" r="1.95" fill="#fff" fill-opacity=".55"/>
<circle cx="521.7" cy="255.8" r="2.75" fill="#fff" fill-opacity=".45"/><circle cx="521.7" cy="255.8" r="1.95" fill="#fff" fill-opacity=".55"/>
<circle cx="516.7" cy="258.7" r="2.75" fill="#fff" fill-opacity=".45"/><circle cx="516.7" cy="258.7" r="1.95" fill="#fff" fill-opacity=".55"/>
<circle cx="517.7" cy="262.8" r="2.75" fill="#fff" fill-opacity=".45"/><circle cx="517.7" cy="262.8" r="1.95" fill="#fff" fill-opacity=".55"/>
<circle cx="451.8" cy="246" r="2.75" fill="#fff" fill-opacity=".45"/><circle cx="451.8" cy="246" r="1.95" fill="#fff" fill-opacity=".55"/>
<circle cx="1312.8" cy="246" r="2.75" fill="#fff" fill-opacity=".45"/><circle cx="1312.8" cy="246" r="1.95" fill="#fff" fill-opacity=".55"/>
<circle cx="523.2" cy="275.3" r="2.75" fill="#fff" fill-opacity=".45"/><circle cx="523.2" cy="275.3" r="1.95" fill="#fff" fill-opacity=".55"/>
<circle cx="530.3" cy="277.7" r="2.75" fill="#fff" fill-opacity=".45"/><circle cx="530.3" cy="277.7" r="1.95" fill="#fff" fill-opacity=".55"/>
<circle cx="620" cy="82.2" r="2.75" fill="#fff" fill-opacity=".45"/><circle cx="620" cy="82.2" r="1.95" fill="#fff" fill-opacity=".55"/>
<circle cx="647.5" cy="96.7" r="2.75" fill="#fff" fill-opacity=".45"/><circle cx="647.5" cy="96.7" r="1.95" fill="#fff" fill-opacity=".55"/>
<circle cx="48.5" cy="161.5" r="2.75" fill="#fff" fill-opacity=".45"/><circle cx="48.5" cy="161.5" r="1.95" fill="#fff" fill-opacity=".55"/>
<circle cx="909.5" cy="161.5" r="2.75" fill="#fff" fill-opacity=".45"/><circle cx="909.5" cy="161.5" r="1.95" fill="#fff" fill-opacity=".55"/>
<circle cx="513.3" cy="243.7" r="2.75" fill="#fff" fill-opacity=".45"/><circle cx="513.3" cy="243.7" r="1.95" fill="#fff" fill-opacity=".55"/>
<circle cx="514.5" cy="245.7" r="2.75" fill="#fff" fill-opacity=".45"/><circle cx="514.5" cy="245.7" r="1.95" fill="#fff" fill-opacity=".55"/>
<circle cx="518.3" cy="254.5" r="2.75" fill="#fff" fill-opacity=".45"/><circle cx="518.3" cy="254.5" r="1.95" fill="#fff" fill-opacity=".55"/>
<circle cx="497" cy="257.5" r="2.75" fill="#fff" fill-opacity=".45"/><circle cx="497" cy="257.5" r="1.95" fill="#fff" fill-opacity=".55"/>
<circle cx="498.8" cy="258.3" r="2.75" fill="#fff" fill-opacity=".45"/><circle cx="498.8" cy="258.3" r="1.95" fill="#fff" fill-opacity=".55"/>
<circle cx="687.1" cy="159.4" r="2.75" fill="#fff" fill-opacity=".45"/><circle cx="687.1" cy="159.4" r="1.95" fill="#fff" fill-opacity=".55"/>
<circle cx="714.1" cy="175" r="2.75" fill="#fff" fill-opacity=".45"/><circle cx="714.1" cy="175" r="1.95" fill="#fff" fill-opacity=".55"/>
<circle cx="785.3" cy="223.1" r="2.75" fill="#fff" fill-opacity=".45"/><circle cx="785.3" cy="223.1" r="1.95" fill="#fff" fill-opacity=".55"/>
<circle cx="570.8" cy="42.7" r="2.75" fill="#fff" fill-opacity=".45"/><circle cx="570.8" cy="42.7" r="1.95" fill="#fff" fill-opacity=".55"/>
<circle cx="516" cy="245" r="2.75" fill="#fff" fill-opacity=".45"/><circle cx="516" cy="245" r="1.95" fill="#fff" fill-opacity=".55"/>
<circle cx="48.4" cy="239.8" r="1.4" fill="#bab0ac"/>
<circle cx="909.4" cy="239.8" r="1.4" fill="#bab0ac"/>
<circle cx="706.3" cy="219.9" r="1.4" fill="#bab0ac"/>
<circle cx="635.9" cy="267" r="1.4" fill="#e15759"/>
<circle cx="666.9" cy="269.3" r="1.4" fill="#e15759"/>
<circle cx="702.5" cy="286.5" r="1.4" fill="#e15759"/>
<circle cx="686.3" cy="100.5" r="1.3" fill="#4e79a7"/>
<circle cx="726.7" cy="93.5" r="1.3" fill="#4e79a7"/>
<circle cx="463.2" cy="263.5" r="1.3" fill="#bab0ac"/>
<circle cx="1324.2" cy="263.5" r="1.3" fill="#bab0ac"/>
<circle cx="470.3" cy="267.8" r="1.3" fill="#bab0ac"/>
<circle cx="1331.3" cy="267.8" r="1.3" fill="#bab0ac"/>
<circle cx="685.9" cy="124.9" r="1.25" fill="#4e79a7"/>
<circle cx="710.6" cy="153.5" r="1.25" fill="#4e79a7"/>
<circle cx="722.1" cy="128.1" r="1.25" fill="#4e79a7"/>
<circle cx="750.3" cy="200.6" r="1.25" fill="#4e79a7"/>
<circle cx="751" cy="210.4" r="1.25" fill="#bab0ac"/>
<circle cx="806.6" cy="184.5" r="1.25" fill="#bab0ac"/>
<circle cx="-17.4" cy="177.6" r="1.25" fill="#bab0ac"/>
<circle cx="843.6" cy="177.6" r="1.25" fill="#bab0ac"/>
<circle cx="641.9" cy="272.3" r="1.25" fill="#e15759"/>
<circle cx="715.3" cy="270.9" r="1.25" fill="#e15759"/>
<circle cx="-21.2" cy="277.5" r="1.2" fill="#bab0ac"/>
<circle cx="839.8" cy="277.5" r="1.2" fill="#bab0ac"/>
<circle cx="103.5" cy="309" r="1.2" fill="#e15759"/>
<circle cx="964.5" cy="309" r="1.2" fill="#e15759"/>
<circle cx="186.2" cy="310.8" r="1.2" fill="#e15759"/>
<circle cx="1047.2" cy="310.8" r="1.2" fill="#e15759"/>
<circle cx="215.3" cy="400.5" r="1.2" fill="#4e79a7"/>
<circle cx="1076.3" cy="400.5" r="1.2" fill="#4e79a7"/>
<circle cx="478.7" cy="243.7" r="1.2" fill="#bab0ac"/>
<circle cx="1339.7" cy="243.7" r="1.2" fill="#bab0ac"/>
<circle cx="504.7" cy="243.3" r="1.2" fill="#4e79a7"/>
<circle cx="703.4" cy="164.4" r="1.1" fill="#4e79a7"/>
<circle cx="706.9" cy="169" r="1.1" fill="#4e79a7"/>
<circle cx="724" cy="120.9" r="1.1" fill="#4e79a7"/>
<circle cx="768.3" cy="176.6" r="1.1" fill="#4e79a7"/>
<circle cx="742.9" cy="198.6" r="1.1" fill="#4e79a7"/>
<circle cx="798.7" cy="239.2" r="1.1" fill="#bab0ac"/>
<circle cx="51.5" cy="284.6" r="1.1" fill="#4e79a7"/>
<circle cx="912.5" cy="284.6" r="1.1" fill="#4e79a7"/>
<circle cx="77.1" cy="276.8" r="1.1" fill="#bab0ac"/>
<circle cx="938.1" cy="276.8" r="1.1" fill="#bab0ac"/>
<circle cx="638.6" cy="240.4" r="1.1" fill="#e15759"/>
<circle cx="646" cy="136.9" r="1.05" fill="#bab0ac"/>
<circle cx="716" cy="178" r="1.05" fill="#4e79a7"/>
<circle cx="712.1" cy="181.1" r="1.05" fill="#4e79a7"/>
<circle cx="732.1" cy="158.1" r="1.05" fill="#4e79a7"/>
<circle cx="726.3" cy="112.8" r="1.05" fill="#4e79a7"/>
<circle cx="770.5" cy="181.5" r="1.05" fill="#4e79a7"/>
<circle cx="777.6" cy="214.1" r="1.05" fill="#bab0ac"/>
<circle cx="149.4" cy="255.3" r="1.05" fill="#bab0ac"/>
<circle cx="1010.4" cy="255.3" r="1.05" fill="#bab0ac"/>
<circle cx="162.9" cy="269.7" r="1.05" fill="#bab0ac"/>
<circle cx="1023.9" cy="269.7" r="1.05" fill="#bab0ac"/>
<circle cx="202.2" cy="325" r="1.05" fill="#bab0ac"/>
<circle cx="1063.2" cy="325" r="1.05" fill="#bab0ac"/>
<circle cx="197.9" cy="339.3" r="1.05" fill="#bab0ac"/>
<circle cx="1058.9" cy="339.3" r="1.05" fill="#bab0ac"/>
<circle cx="228.8" cy="331" r="1.05" fill="#bab0ac"/>
<circle cx="1089.8" cy="331" r="1.05" fill="#bab0ac"/>
<circle cx="245.2" cy="339.6" r="1.05" fill="#bab0ac"/>
<circle cx="1106.2" cy="339.6" r="1.05" fill="#bab0ac"/>
<circle cx="251.7" cy="320.6" r="1.05" fill="#bab0ac"/>
<circle cx="1112.7" cy="320.6" r="1.05" fill="#bab0ac"/>
<circle cx="284.9" cy="282.9" r="1.05" fill="#bab0ac"/>
<circle cx="1145.9" cy="282.9" r="1.05" fill="#bab0ac"/>
<circle cx="306.5" cy="330.3" r="1.05" fill="#bab0ac"/>
<circle cx="1167.5" cy="330.3" r="1.05" fill="#bab0ac"/>
<circle cx="629" cy="255" r="1.05" fill="#e15759"/>
<circle cx="629.6" cy="258.5" r="1.05" fill="#e15759"/>
<circle cx="679.9" cy="287.1" r="1.05" fill="#e15759"/>
<circle cx="689.1" cy="283.8" r="1.05" fill="#e15759"/>
<circle cx="692.6" cy="288.8" r="1.05" fill="#e15759"/>
<circle cx="705.3" cy="339.8" r="1.05" fill="#bab0ac"/>
<circle cx="720.5" cy="342" r="1.05" fill="#bab0ac"/>
<circle cx="732" cy="361.3" r="1.05" fill="#bab0ac"/>
<circle cx="796.8" cy="299" r="1.05" fill="#bab0ac"/>
<circle cx="477.5" cy="226.7" r="1.05" fill="#bab0ac"/>
<circle cx="1338.5" cy="226.7" r="1.05" fill="#bab0ac"/>
<circle cx="469.7" cy="240.7" r="1.05" fill="#4e79a7"/>
<circle cx="1330.7" cy="240.7" r="1.05" fill="#4e79a7"/>
<circle cx="529.7" cy="371.3" r="1.05" fill="#bab0ac"/>
<circle cx="653.4" cy="132.8" r="1.05" fill="#e15759"/>
<circle cx="678.8" cy="150.5" r="1.05" fill="#4e79a7"/>
<circle cx="681.9" cy="171.3" r="1.05" fill="#e15759"/>
<circle cx="668" cy="175.1" r="1.05" fill="#4e79a7"/>
<circle cx="698.6" cy="195.8" r="1.05" fill="#4e79a7"/>
<circle cx="698.9" cy="163.5" r="1.05" fill="#4e79a7"/>
<circle cx="709.9" cy="174.1" r="1.05" fill="#4e79a7"/>
<circle cx="786.5" cy="225" r="1.05" fill="#4e79a7"/>
<circle cx="208.8" cy="273.5" r="1.05" fill="#e15759"/>
<circle cx="1069.8" cy="273.5" r="1.05" fill="#e15759"/>
<circle cx="255.9" cy="322.3" r="1.05" fill="#e15759"/>
<circle cx="1116.9" cy="322.3" r="1.05" fill="#e15759"/>
<circle cx="765" cy="260.4" r="1.05" fill="#bab0ac"/>
<circle cx="767.8" cy="315.8" r="1.05" fill="#e15759"/>
<circle cx="739.3" cy="353.7" r="1.05" fill="#e15759"/>
<circle cx="801.8" cy="337.3" r="1.05" fill="#4e79a7"/>
<circle cx="509.2" cy="206" r="1.05" fill="#4e79a7"/>
<circle cx="492.5" cy="234.3" r="1.05" fill="#e15759"/>
<circle cx="1353.5" cy="234.3" r="1.05" fill="#e15759"/>
<circle cx="517.5" cy="250.3" r="1.05" fill="#e15759"/>
<circle cx="521.7" cy="255.8" r="1.05" fill="#4e79a7"/>
<circle cx="516.7" cy="258.7" r="1.05" fill="#bab0ac"/>
<circle cx="517.7" cy="262.8" r="1.05" fill="#bab0ac"/>
<circle cx="451.8" cy="246" r="1.05" fill="#bab0ac"/>
<circle cx="1312.8" cy="246" r="1.05" fill="#bab0ac"/>
<circle cx="523.2" cy="275.3" r="1.05" fill="#bab0ac"/>
<circle cx="530.3" cy="277.7" r="1.05" fill="#bab0ac"/>
<circle cx="620" cy="82.2" r="1.05" fill="#4e79a7"/>
<circle cx="647.5" cy="96.7" r="1.05" fill="#4e79a7"/>
<circle cx="48.5" cy="161.5" r="1.05" fill="#bab0ac"/>
<circle cx="909.5" cy="161.5" r="1.05" fill="#bab0ac"/>
<circle cx="513.3" cy="243.7" r="1.05" fill="#e15759"/>
<circle cx="514.5" cy="245.7" r="1.05" fill="#e15759"/>
<circle cx="518.3" cy="254.5" r="1.05" fill="#bab0ac"/>
<circle cx="497" cy="257.5" r="1.05" fill="#4e79a7"/>
<circle cx="498.8" cy="258.3" r="1.05" fill="#4e79a7"/>
<circle cx="687.1" cy="159.4" r="1.05" fill="#4e79a7"/>
<circle cx="714.1" cy="175" r="1.05" fill="#bab0ac"/>
<circle cx="785.3" cy="223.1" r="1.05" fill="#bab0ac"/>
<circle cx="570.8" cy="42.7" r="1.05" fill="#4e79a7"/>
<circle cx="516" cy="245" r="1.05" fill="#bab0ac"/>
</svg><div style="position:absolute;left:2.5px;top:428.700px;width:186.500px;height:4px;background:#fff"></div><div style="position:absolute;left:0;top:0;width:1329px;height:440px;border:1px solid #ebebeb"></div></div>
</body></html>
